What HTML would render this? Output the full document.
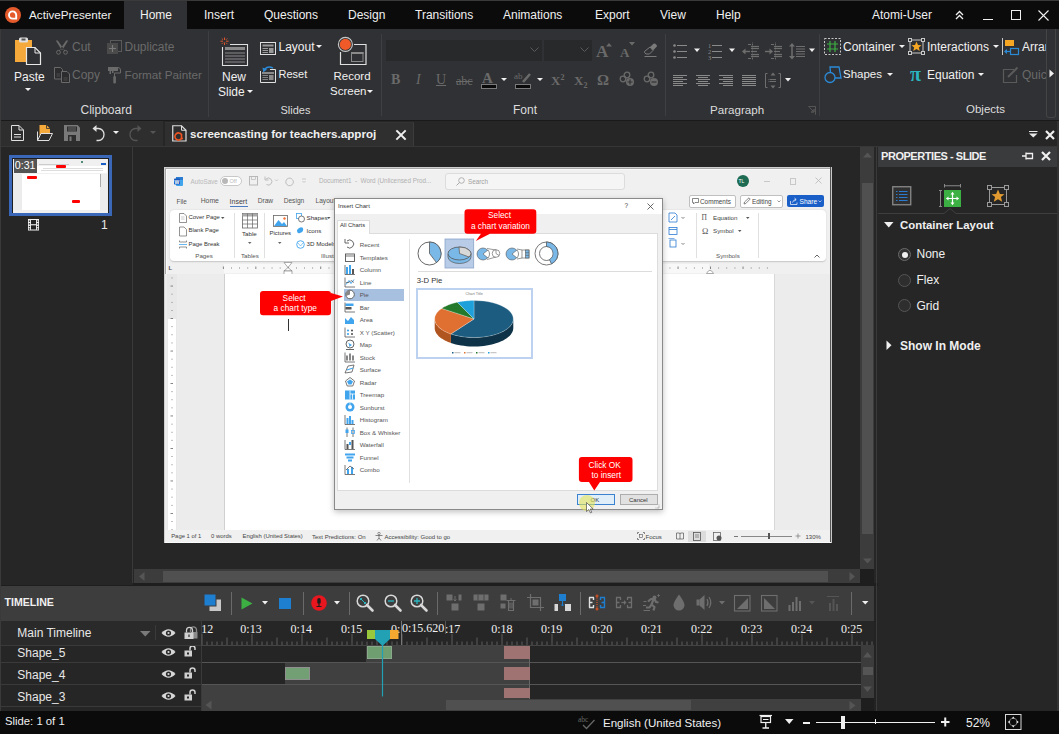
<!DOCTYPE html>
<html><head><meta charset="utf-8">
<style>
*{box-sizing:border-box;margin:0;padding:0}
html,body{width:1059px;height:734px;overflow:hidden;background:#262626;font-family:"Liberation Sans",sans-serif;}
.a{position:absolute}
.t{position:absolute;white-space:nowrap;line-height:1;font-size:12px;color:#e8e8e8}
.dis{color:#6a6a6a}
.lbl{color:#dcdcdc}
svg{position:absolute;overflow:visible}
.w{font-family:"Liberation Sans",sans-serif;color:#444}
</style></head><body>
<!-- window top line -->
<div class="a" style="left:0;top:0;width:1059px;height:1px;background:#3a3a3a"></div>
<!-- TITLE BAR -->
<div class="a" id="titlebar" style="left:0;top:1px;width:1059px;height:28px;background:#0b0b0b"></div>
<div class="a" style="left:124px;top:1px;width:63px;height:28px;background:#303134"></div>
<div class="a" style="left:5px;top:7px;width:16px;height:16px;border-radius:50%;background:#e55a2b"></div>
<svg style="left:5px;top:7px" width="16" height="16"><path d="M11.2 8 A3.6 3.6 0 1 0 7.6 11.6 H11.2 V8" fill="none" stroke="#fff" stroke-width="1.9"/></svg>
<div class="t" style="left:29px;top:9px;font-size:11.7px;color:#f0f0f0">ActivePresenter</div>
<div class="t" style="left:140px;top:9px;color:#f0f0f0">Home</div>
<div class="t" style="left:204px;top:9px;color:#f0f0f0">Insert</div>
<div class="t" style="left:264px;top:9px;color:#f0f0f0">Questions</div>
<div class="t" style="left:348px;top:9px;color:#f0f0f0">Design</div>
<div class="t" style="left:415px;top:9px;color:#f0f0f0">Transitions</div>
<div class="t" style="left:503px;top:9px;color:#f0f0f0">Animations</div>
<div class="t" style="left:595px;top:9px;color:#f0f0f0">Export</div>
<div class="t" style="left:660px;top:9px;color:#f0f0f0">View</div>
<div class="t" style="left:716px;top:9px;color:#f0f0f0">Help</div>
<div class="t" style="left:872px;top:9px;color:#f0f0f0">Atomi-User</div>
<svg style="left:955px;top:10px" width="10" height="10"><path d="M1 5 L4.5 1.5 L8 5 M1 9 L4.5 5.5 L8 9" stroke="#f0f0f0" stroke-width="1.3" fill="none"/></svg>
<div class="a" style="left:983px;top:19px;width:10px;height:1px;background:#f0f0f0"></div>
<div class="a" style="left:1011px;top:10px;width:10px;height:10px;border:1px solid #f0f0f0"></div>
<svg style="left:1038px;top:10px" width="12" height="11"><path d="M0.5 0.5 L10.5 10.5 M10.5 0.5 L0.5 10.5" stroke="#f0f0f0" stroke-width="1.1"/></svg>

<!-- RIBBON -->
<div class="a" id="ribbon" style="left:0;top:29px;width:1059px;height:91px;background:#303134"></div>
<div class="a" style="left:0;top:120px;width:1059px;height:1px;background:#1a1a1a"></div>

<!-- Clipboard group -->
<svg style="left:14px;top:36px" width="28" height="30">
 <rect x="1" y="4" width="17" height="22" fill="#f5a93a"/>
 <rect x="5" y="1.5" width="9" height="5" rx="1.5" fill="#e0e0e0"/>
 <rect x="7.5" y="2.5" width="4" height="2" fill="#555"/>
 <path d="M12.5 11.5 H21 L26.5 17 V28.5 H12.5 Z" fill="#303134" stroke="#e8e8e8" stroke-width="1.2"/>
 <path d="M21 11.5 V17 H26.5" fill="none" stroke="#e8e8e8" stroke-width="1"/>
</svg>
<div class="t" style="left:14px;top:71px;color:#f0f0f0">Paste</div>
<svg style="left:25px;top:88px" width="7" height="4"><path d="M0 0 H6 L3 3Z" fill="#f0f0f0"/></svg>
<svg style="left:55px;top:40px" width="14" height="15"><path d="M0.8 0.5 L2.8 0.5 L8.2 8.3 L6.6 10Z M13.2 0.5 L11.2 0.5 L5.8 8.3 L7.4 10Z" fill="#6a6a6a"/><path d="M5.2 9.5 L4 11 M8.8 9.5 L10 11" stroke="#6a6a6a" stroke-width="1"/><circle cx="3.5" cy="12.3" r="1.9" fill="none" stroke="#6a6a6a" stroke-width="1"/><circle cx="10.5" cy="12.3" r="1.9" fill="none" stroke="#6a6a6a" stroke-width="1"/></svg>
<div class="t dis" style="left:72px;top:41px">Cut</div>
<svg style="left:107px;top:40px" width="15" height="15"><rect x="3.5" y="0.5" width="11" height="11" fill="none" stroke="#5a5a5a"/><rect x="0" y="3" width="11" height="11" fill="#4a4a4a"/><path d="M5.5 5 V12 M2 8.5 H9" stroke="#7a7a7a" stroke-width="1.2"/></svg>
<div class="t dis" style="left:124.5px;top:41px">Duplicate</div>
<svg style="left:54px;top:67px" width="17" height="16"><path d="M0.5 0.5 H6.5 L8.5 2.5 V12 H0.5Z" fill="#2c2c2e" stroke="#6a6a6a"/><path d="M2.5 7 H6 M2.5 9 H6" stroke="#555" stroke-width="0.8"/><path d="M7.5 4.5 H13 L15.5 7 V15.5 H7.5Z" fill="#2c2c2e" stroke="#6a6a6a"/><path d="M9.5 11 H13.5 M9.5 13 H13.5" stroke="#555" stroke-width="0.8"/></svg>
<div class="t dis" style="left:72px;top:69px">Copy</div>
<svg style="left:108px;top:67px" width="14" height="17"><path d="M0 0.5 H10 Q12.5 0.5 12.5 3 V6 H6.5 V9" fill="none" stroke="#6a6a6a" stroke-width="1"/><rect x="0" y="0.5" width="10" height="3.5" fill="#6a6a6a"/><rect x="1.5" y="4" width="1.5" height="3" fill="#6a6a6a"/><rect x="4" y="4" width="1.5" height="2" fill="#6a6a6a"/><rect x="5.3" y="9" width="2.6" height="7.5" rx="1" fill="#6a6a6a"/></svg>
<div class="t dis" style="left:124.5px;top:69px;font-size:11.7px">Format Painter</div>
<div class="t lbl" style="left:80.5px;top:104px">Clipboard</div>
<div class="a" style="left:208px;top:31px;width:1px;height:86px;background:#3e3f42"></div>

<!-- Slides group -->
<svg style="left:221px;top:36px" width="29" height="30">
 <path d="M3.5 1.5 V4 M3.5 6.5 V9 M-0.5 5.2 H2 M5 5.2 H7.5 M0.8 2.5 L2 3.7 M5 6.7 L6.2 7.9 M6.2 2.5 L5 3.7 M2 6.7 L0.8 7.9" stroke="#f05a2a" stroke-width="0.9"/>
 <path d="M9 8.5 H26.5 V29.5 H1.5 V11" fill="none" stroke="#e0e0e0" stroke-width="1.1"/>
 <rect x="4" y="11" width="20" height="3" fill="#8a8a8a"/>
 <path d="M4 17 H24 M4 20 H24 M4 23 H24 M4 26 H24" stroke="#8a8a8a" stroke-width="1"/>
</svg>
<div class="t" style="left:222px;top:71px;color:#f0f0f0">New</div>
<div class="t" style="left:218px;top:85.5px;color:#f0f0f0">Slide</div>
<svg style="left:247px;top:90px" width="7" height="4"><path d="M0 0 H6 L3 3Z" fill="#f0f0f0"/></svg>
<svg style="left:260px;top:42px" width="17" height="14"><rect x="0.5" y="0.5" width="15" height="12" fill="none" stroke="#e0e0e0"/><rect x="2.5" y="2.5" width="11" height="2" fill="#9a9a9a"/><path d="M2.5 6.5 H8 M2.5 8.5 H8 M2.5 10.5 H8" stroke="#9a9a9a"/><rect x="9" y="6" width="4.5" height="5" fill="#9a9a9a"/></svg>
<div class="t" style="left:278.5px;top:41px;color:#f0f0f0">Layout</div>
<svg style="left:316px;top:45px" width="7" height="4"><path d="M0 0 H6 L3 3Z" fill="#f0f0f0"/></svg>
<svg style="left:260px;top:66px" width="17" height="17"><path d="M0.5 5 V16.5 H15.5 V3.5 H10" fill="none" stroke="#e0e0e0"/><rect x="2" y="6" width="12" height="2" fill="#8a8a8a"/><path d="M2.5 9.5 H8 M2.5 11.5 H8 M2.5 13.5 H8" stroke="#8a8a8a" stroke-width="0.9"/><rect x="9" y="9" width="4.5" height="5" fill="#8a8a8a"/><path d="M13 2.2 Q8.5 -0.5 4.5 3.3" stroke="#2a8ad8" stroke-width="1.4" fill="none"/><path d="M2.5 1.5 L3.3 6.2 L7 3.5Z" fill="#2a8ad8"/></svg>
<div class="t" style="left:278.5px;top:69px;color:#f0f0f0;font-size:11px">Reset</div>
<svg style="left:336px;top:35px" width="32" height="32">
 <path d="M18 9.5 H30 V29.5 H4.5 V17" fill="none" stroke="#e0e0e0" stroke-width="1.2"/>
 <rect x="15.5" y="17.5" width="11.5" height="9" fill="none" stroke="#8a8a8a" stroke-width="1"/>
 <rect x="15" y="17" width="12.5" height="2" fill="#8a8a8a"/>
 <circle cx="9.4" cy="9.4" r="7" fill="#303134" stroke="#c8c8c8" stroke-width="1.1"/>
 <circle cx="9.4" cy="9.4" r="5.6" fill="#f05a28"/>
</svg>
<div class="t" style="left:333.5px;top:71px;color:#f0f0f0;font-size:11.5px">Record</div>
<div class="t" style="left:330px;top:85.5px;color:#f0f0f0;font-size:11.5px">Screen</div>
<svg style="left:367px;top:90px" width="7" height="4"><path d="M0 0 H6 L3 3Z" fill="#f0f0f0"/></svg>
<div class="t lbl" style="left:280.5px;top:104.5px;font-size:11px">Slides</div>
<div class="a" style="left:381px;top:34px;width:1px;height:82px;background:#3e3f42"></div>

<!-- Font group -->
<div class="a" style="left:385.5px;top:39.5px;width:156px;height:21px;background:#28292b"></div>
<svg style="left:530px;top:47px" width="9" height="6"><path d="M0.5 0.5 L4.5 4.5 L8.5 0.5" stroke="#5a5a5a" fill="none"/></svg>
<div class="a" style="left:543.5px;top:39.5px;width:48.5px;height:21px;background:#28292b"></div>
<svg style="left:580px;top:47px" width="9" height="6"><path d="M0.5 0.5 L4.5 4.5 L8.5 0.5" stroke="#5a5a5a" fill="none"/></svg>
<div class="a" style="left:596px;top:42.5px;font-family:'Liberation Serif';font-size:17px;font-weight:bold;color:#6a6a6a;line-height:1">A</div>
<svg style="left:606px;top:42.5px" width="7" height="4"><path d="M0 3.5 L3 0 L6 3.5Z" fill="#6a6a6a"/></svg>
<div class="a" style="left:620px;top:46px;font-family:'Liberation Serif';font-size:13px;font-weight:bold;color:#6a6a6a;line-height:1">A</div>
<svg style="left:629px;top:42px" width="7" height="4"><path d="M0 0 L3 3.5 L6 0Z" fill="#6a6a6a"/></svg>
<svg style="left:644px;top:43px" width="14" height="15"><path d="M6 4 L9.5 0.8 Q10.5 0 11.3 0.8 L12.6 2.1 Q13.4 3 12.6 3.8 L9 7.5Z" fill="#7a7a7a"/><path d="M6 4 L9 7.5 L5.5 11 H2 L0.8 9.8 Q0 9 0.8 8.2Z" fill="none" stroke="#7a7a7a" stroke-width="1"/><path d="M0.5 13.5 H12.5" stroke="#7a7a7a" stroke-width="1"/></svg>
<div class="a" style="left:391px;top:73px;font-family:'Liberation Serif';font-size:14px;font-weight:bold;color:#6a6a6a;line-height:1">B</div>
<div class="a" style="left:416px;top:73px;font-family:'Liberation Serif';font-size:14px;font-style:italic;color:#6a6a6a;line-height:1">I</div>
<div class="a" style="left:436px;top:73px;font-family:'Liberation Serif';font-size:14px;color:#6a6a6a;line-height:1;text-decoration:underline">U</div>
<div class="a" style="left:456px;top:75px;font-family:'Liberation Serif';font-size:12px;color:#6a6a6a;line-height:1;text-decoration:line-through">abc</div>
<div class="a" style="left:482px;top:70.5px;font-family:'Liberation Serif';font-size:15px;font-weight:bold;color:#6a6a6a;line-height:1">A</div>
<div class="a" style="left:480.5px;top:84px;width:16px;height:4.5px;background:#0a0a0a;border:1px solid #7a7a7a"></div>
<svg style="left:501px;top:78px" width="7" height="4"><path d="M0 0 H6 L3 3Z" fill="#f0f0f0"/></svg>
<div class="a" style="left:514px;top:72px;font-family:'Liberation Serif';font-size:9px;color:#6a6a6a;line-height:1">ab</div>
<svg style="left:520px;top:72px" width="12" height="12"><path d="M3 10 L10 2" stroke="#6a6a6a" stroke-width="2.5"/></svg>
<div class="a" style="left:515px;top:84px;width:16px;height:4.5px;background:#0a0a0a;border:1px solid #7a7a7a"></div>
<svg style="left:537px;top:78px" width="7" height="4"><path d="M0 0 H6 L3 3Z" fill="#f0f0f0"/></svg>
<div class="a" style="left:551px;top:74px;font-family:'Liberation Serif';font-size:13px;font-weight:bold;color:#6a6a6a;line-height:1">X<sup style="font-size:8px;vertical-align:5px">2</sup></div>
<div class="a" style="left:574px;top:74px;font-family:'Liberation Serif';font-size:13px;font-weight:bold;color:#6a6a6a;line-height:1">X<sub style="font-size:8px;vertical-align:-3px">2</sub></div>
<div class="a" style="left:597px;top:73px;font-family:'Liberation Serif';font-size:15px;font-weight:bold;color:#6a6a6a;line-height:1">&#937;</div>
<svg style="left:619px;top:71px" width="16" height="16"><circle cx="4" cy="8" r="2.8" fill="none" stroke="#6a6a6a" stroke-width="1.3"/><circle cx="8" cy="4" r="2.8" fill="none" stroke="#6a6a6a" stroke-width="1.3"/><circle cx="11" cy="11" r="4" fill="#6a6a6a"/><path d="M11 8.5 V13.5 M8.5 11 H13.5" stroke="#303134" stroke-width="1.2"/></svg>
<svg style="left:643px;top:71px" width="16" height="16"><circle cx="4" cy="8" r="2.8" fill="none" stroke="#6a6a6a" stroke-width="1.3"/><circle cx="8" cy="4" r="2.8" fill="none" stroke="#6a6a6a" stroke-width="1.3"/><circle cx="11" cy="11" r="4" fill="#6a6a6a"/><path d="M8.5 11 H13.5" stroke="#303134" stroke-width="1.2"/></svg>
<div class="t lbl" style="left:513px;top:104px">Font</div>
<div class="a" style="left:665px;top:34px;width:1px;height:82px;background:#3e3f42"></div>


<!-- Paragraph group -->
<svg style="left:668px;top:38px" width="152" height="54"><circle cx="6.5" cy="7.5" r="1.3" fill="#8a8a8a"/><path d="M9 7.5 H19" stroke="#8a8a8a" stroke-width="1"/><circle cx="6.5" cy="13.5" r="1.3" fill="#8a8a8a"/><path d="M9 13.5 H19" stroke="#8a8a8a" stroke-width="1"/><circle cx="6.5" cy="19.5" r="1.3" fill="#8a8a8a"/><path d="M9 19.5 H19" stroke="#8a8a8a" stroke-width="1"/><path d="M26 10.5 H32 L29 14Z" fill="#f0f0f0"/><text x="40" y="10.3" font-size="6.5" font-family="Liberation Serif" fill="#8a8a8a">1</text><path d="M44 7.5 H54" stroke="#8a8a8a" stroke-width="1"/><text x="40" y="16.3" font-size="6.5" font-family="Liberation Serif" fill="#8a8a8a">2</text><path d="M44 13.5 H54" stroke="#8a8a8a" stroke-width="1"/><text x="40" y="22.3" font-size="6.5" font-family="Liberation Serif" fill="#8a8a8a">3</text><path d="M44 19.5 H54" stroke="#8a8a8a" stroke-width="1"/><path d="M61 10.5 H67 L64 14Z" fill="#f0f0f0"/><path d="M80 6.5 H83" stroke="#6e6e6e" stroke-width="1"/><path d="M84 6.5 H85" stroke="#6e6e6e" stroke-width="1"/><path d="M83 8.5 H91" stroke="#6e6e6e" stroke-width="1.2"/><path d="M83 10.5 H91" stroke="#6e6e6e" stroke-width="1.2"/><path d="M83 13.5 H89" stroke="#6e6e6e" stroke-width="1.2"/><path d="M83 16.5 H91" stroke="#6e6e6e" stroke-width="1.2"/><path d="M83 18.5 H91" stroke="#6e6e6e" stroke-width="1.2"/><path d="M80 20.5 H83" stroke="#6e6e6e" stroke-width="1"/><path d="M84 20.5 H85" stroke="#6e6e6e" stroke-width="1"/><path d="M84.5 4.5 V22.5" stroke="#6e6e6e" stroke-width="0.8" stroke-dasharray="1 1"/><path d="M74 13.5 L77.5 10.5 V16.5Z" fill="#6e6e6e"/><path d="M77 13.5 H82" stroke="#6e6e6e" stroke-width="1.4"/><path d="M103 6.5 H106" stroke="#6e6e6e" stroke-width="1"/><path d="M107 6.5 H108" stroke="#6e6e6e" stroke-width="1"/><path d="M106 8.5 H114" stroke="#6e6e6e" stroke-width="1.2"/><path d="M106 10.5 H114" stroke="#6e6e6e" stroke-width="1.2"/><path d="M106 13.5 H112" stroke="#6e6e6e" stroke-width="1.2"/><path d="M106 16.5 H114" stroke="#6e6e6e" stroke-width="1.2"/><path d="M106 18.5 H114" stroke="#6e6e6e" stroke-width="1.2"/><path d="M103 20.5 H106" stroke="#6e6e6e" stroke-width="1"/><path d="M107 20.5 H108" stroke="#6e6e6e" stroke-width="1"/><path d="M107.5 4.5 V22.5" stroke="#6e6e6e" stroke-width="0.8" stroke-dasharray="1 1"/><path d="M105 13.5 L101.5 10.5 V16.5Z" fill="#6e6e6e"/><path d="M97 13.5 H102" stroke="#6e6e6e" stroke-width="1.4"/><path d="M124 5 L121 8.5 H127Z M124 21.5 L121 18 H127Z" fill="#6e6e6e"/><path d="M124 8 V18.5" stroke="#6e6e6e" stroke-width="1.5"/><path d="M128 8.5 H137" stroke="#6e6e6e" stroke-width="1"/><path d="M128 11 H137" stroke="#6e6e6e" stroke-width="1"/><path d="M128 13.5 H137" stroke="#6e6e6e" stroke-width="1"/><path d="M128 16 H137" stroke="#6e6e6e" stroke-width="1"/><path d="M128 18.5 H137" stroke="#6e6e6e" stroke-width="1"/><path d="M141 10.5 H147 L144 14Z" fill="#f0f0f0"/><path d="M5 37.5 H19" stroke="#8a8a8a" stroke-width="1"/><path d="M5 39.5 H15" stroke="#8a8a8a" stroke-width="1"/><path d="M5 41.5 H19" stroke="#8a8a8a" stroke-width="1"/><path d="M5 43.5 H15" stroke="#8a8a8a" stroke-width="1"/><path d="M5 45.5 H19" stroke="#8a8a8a" stroke-width="1"/><path d="M5 47.5 H15" stroke="#8a8a8a" stroke-width="1"/><path d="M28 37.5 H42" stroke="#8a8a8a" stroke-width="1"/><path d="M30 39.5 H40" stroke="#8a8a8a" stroke-width="1"/><path d="M28 41.5 H42" stroke="#8a8a8a" stroke-width="1"/><path d="M30 43.5 H40" stroke="#8a8a8a" stroke-width="1"/><path d="M28 45.5 H42" stroke="#8a8a8a" stroke-width="1"/><path d="M30 47.5 H40" stroke="#8a8a8a" stroke-width="1"/><path d="M51 37.5 H65" stroke="#8a8a8a" stroke-width="1"/><path d="M55 39.5 H65" stroke="#8a8a8a" stroke-width="1"/><path d="M51 41.5 H65" stroke="#8a8a8a" stroke-width="1"/><path d="M55 43.5 H65" stroke="#8a8a8a" stroke-width="1"/><path d="M51 45.5 H65" stroke="#8a8a8a" stroke-width="1"/><path d="M55 47.5 H65" stroke="#8a8a8a" stroke-width="1"/><path d="M74 37.5 H88" stroke="#8a8a8a" stroke-width="1"/><path d="M74 39.5 H88" stroke="#8a8a8a" stroke-width="1"/><path d="M74 41.5 H88" stroke="#8a8a8a" stroke-width="1"/><path d="M74 43.5 H88" stroke="#8a8a8a" stroke-width="1"/><path d="M74 45.5 H88" stroke="#8a8a8a" stroke-width="1"/><path d="M74 47.5 H88" stroke="#8a8a8a" stroke-width="1"/><path d="M99.5 35.5 H97.5 V49.5 H99.5 M110.5 35.5 H112.5 V49.5 H110.5" fill="none" stroke="#6e6e6e"/><path d="M105 34.5 L102.5 37.5 H107.5Z M105 50.5 L102.5 47.5 H107.5Z" fill="#6e6e6e"/><path d="M102 41.5 H108" stroke="#6e6e6e" stroke-width="1"/><path d="M102 43.5 H108" stroke="#6e6e6e" stroke-width="1"/><path d="M100.5 41.5 H101.5 M100.5 43.5 H101.5" stroke="#6e6e6e"/><path d="M117 40 H123 L120 43.5Z" fill="#f0f0f0"/></svg>
<svg style="left:808px;top:106px" width="8" height="9"><path d="M0.5 0.5 H7.5 V8.5" stroke="#555" fill="none"/><path d="M1.5 1.5 L6 6 M3 6 H6 V3" stroke="#555" fill="none"/></svg>
<div class="t lbl" style="left:710px;top:104px;font-size:11.6px">Paragraph</div>
<svg style="left:808px;top:106px" width="8" height="9"><path d="M0.5 0.5 H7.5 V8.5" stroke="#555" fill="none"/><path d="M1.5 1.5 L6 6 M3 6 H6 V3" stroke="#555" fill="none"/></svg>
<div class="a" style="left:819px;top:34px;width:1px;height:82px;background:#3e3f42"></div>

<!-- Objects group -->
<svg style="left:824px;top:38px" width="18" height="18"><rect x="0.5" y="0.5" width="16" height="16" fill="none" stroke="#c8c8c8" stroke-dasharray="2 1.5"/><path d="M6 3 V14 M11 3 V14 M3 6 H14 M3 11 H14" stroke="#3cb043" stroke-width="1.2"/></svg>
<div class="t" style="left:843px;top:41px;color:#f0f0f0">Container</div>
<svg style="left:899px;top:45px" width="7" height="4"><path d="M0 0 H6 L3 3Z" fill="#f0f0f0"/></svg>
<svg style="left:908px;top:38px" width="18" height="18"><rect x="2" y="2" width="13" height="13" fill="none" stroke="#c8c8c8"/><rect x="0.5" y="0.5" width="3" height="3" fill="#303134" stroke="#c8c8c8"/><rect x="13.5" y="0.5" width="3" height="3" fill="#303134" stroke="#c8c8c8"/><rect x="0.5" y="13.5" width="3" height="3" fill="#303134" stroke="#c8c8c8"/><rect x="13.5" y="13.5" width="3" height="3" fill="#303134" stroke="#c8c8c8"/><path d="M8.5 3.5 L10 7 L13.5 7.2 L10.8 9.4 L11.8 13 L8.5 11 L5.2 13 L6.2 9.4 L3.5 7.2 L7 7Z" fill="#f5a623"/></svg>
<div class="t" style="left:927px;top:41px;color:#f0f0f0">Interactions</div>
<svg style="left:993px;top:45px" width="7" height="4"><path d="M0 0 H6 L3 3Z" fill="#f0f0f0"/></svg>
<svg style="left:1002px;top:38px" width="18" height="18"><path d="M0.5 0 V17" stroke="#c8c8c8"/><rect x="3" y="2" width="9" height="6" fill="#f5a623"/><rect x="8.5" y="10.5" width="8" height="6" fill="none" stroke="#2a8ad8" stroke-width="1.2"/><path d="M3 13.5 H8" stroke="#2a8ad8" stroke-width="1.2"/><path d="M2 13.5 L5 11 V16Z" fill="#2a8ad8"/></svg>
<div class="a" style="left:1020px;top:29px;width:26px;height:30px;overflow:hidden"><div class="t" style="left:2px;top:12px;color:#f0f0f0">Arrange</div></div>
<svg style="left:824px;top:66px" width="18" height="18"><path d="M6 1 H15 L17 12 H7Z" fill="none" stroke="#2a8ad8" stroke-width="1.3"/><circle cx="6" cy="11.5" r="5" fill="#303134" stroke="#2a8ad8" stroke-width="1.3"/></svg>
<div class="t" style="left:843px;top:69px;color:#f0f0f0;font-size:11.5px">Shapes</div>
<svg style="left:887px;top:73px" width="7" height="4"><path d="M0 0 H6 L3 3Z" fill="#f0f0f0"/></svg>
<div class="a" style="left:910px;top:64px;font-family:'Liberation Serif';font-size:20px;font-weight:bold;color:#2ab5c0;line-height:1">&#960;</div>
<div class="t" style="left:927px;top:69px;color:#f0f0f0">Equation</div>
<svg style="left:978px;top:73px" width="7" height="4"><path d="M0 0 H6 L3 3Z" fill="#f0f0f0"/></svg>
<svg style="left:1002px;top:66px" width="18" height="18"><path d="M12 3.5 H1.5 V16.5 H14.5 V9" fill="none" stroke="#5a5a5a" stroke-width="1.2"/><path d="M6 11 L15.5 1.5" stroke="#5a5a5a" stroke-width="2"/></svg>
<div class="a" style="left:1020px;top:60px;width:26px;height:28px;overflow:hidden"><div class="t dis" style="left:2px;top:9px">Quick</div></div>
<div class="a" style="left:1046px;top:29px;width:10px;height:89px;border:1px solid #444;border-top:none;border-radius:0 0 3px 3px"></div>
<svg style="left:1049px;top:69px" width="6" height="9"><path d="M0.5 0.5 L5 4.5 L0.5 8.5Z" fill="#f0f0f0"/></svg>
<div class="t lbl" style="left:966px;top:104px;font-size:11.5px">Objects</div>

<!-- RIBBON_CONTENT -->

<!-- QA BAR -->
<div class="a" style="left:0;top:121px;width:1059px;height:25px;background:#262626"></div>
<div class="a" style="left:1px;top:121px;width:162px;height:25px;background:#2e2e2e"></div>
<div class="a" style="left:165px;top:122px;width:249px;height:24px;background:#2f2f2f;border-right:1px solid #3c3c3c;border-top:1px solid #333"></div>

<svg style="left:10px;top:125px" width="15" height="17"><path d="M1.5 0.5 H9 L13.5 5 V15.5 H1.5Z" fill="none" stroke="#e0e0e0" stroke-width="1"/><path d="M9 0.5 V5 H13.5" fill="none" stroke="#e0e0e0" stroke-width="1"/><path d="M4 9.5 H11 M4 12 H11" stroke="#e0e0e0" stroke-width="1"/></svg>
<svg style="left:36px;top:125px" width="18" height="17"><path d="M3.5 0 H10.5 L14 3.5 V10 H3.5Z" fill="#f5a93a"/><path d="M10.5 0 V3.5 H14" fill="none" stroke="#2e2e2e" stroke-width="0.8"/><path d="M1.5 6.5 V15.5 H13 L16.5 8.5 H5 L1.5 15.5" fill="#2e2e2e" stroke="#e0e0e0" stroke-width="1"/></svg>
<svg style="left:64px;top:125px" width="17" height="17"><path d="M0 0 H13.5 L16 2.5 V16 H0Z" fill="#7a7a7a"/><rect x="3" y="1.5" width="10" height="5" fill="#2e2e2e"/><path d="M4 3 H12 M4 5 H12" stroke="#7a7a7a" stroke-width="0.8"/><rect x="4" y="10" width="8" height="6" fill="#2e2e2e"/><rect x="5.5" y="11.5" width="2" height="4.5" fill="#7a7a7a"/></svg>
<svg style="left:92px;top:125px" width="14" height="17"><path d="M3 3.5 H6.5 A5.5 6 0 0 1 6.5 15.5 H4.5" fill="none" stroke="#e0e0e0" stroke-width="1.3"/><path d="M0.5 3.5 L4.5 0 V7Z" fill="#e0e0e0"/></svg>
<svg style="left:113px;top:131px" width="7" height="4"><path d="M0 0 H6 L3 3Z" fill="#f0f0f0"/></svg>
<svg style="left:128px;top:125px" width="14" height="17"><path d="M11 3.5 H7.5 A5.5 6 0 0 0 7.5 15.5 H9.5" fill="none" stroke="#555" stroke-width="1.3"/><path d="M13.5 3.5 L9.5 0 V7Z" fill="#555"/></svg>
<svg style="left:150px;top:131px" width="7" height="4"><path d="M0 0 H6 L3 3Z" fill="#555"/></svg>
<svg style="left:172px;top:125px" width="15" height="17"><path d="M0.75 0.75 H9.5 L14 5.25 V16 H0.75Z" fill="#2e2e2e" stroke="#e0e0e0" stroke-width="1.2"/><path d="M9.5 0.75 V5.25 H14" fill="none" stroke="#e0e0e0" stroke-width="1"/><path d="M9.5 13.5 A3.6 3.6 0 1 1 9.5 9.5 V13.5 H11" fill="none" stroke="#ee5522" stroke-width="1.6"/></svg>
<div class="t" style="left:190px;top:128px;font-size:11.6px;font-weight:bold;color:#f0f0f0">screencasting for teachers.approj</div>
<svg style="left:396px;top:129.5px" width="10" height="10"><path d="M1 1 L9 9 M9 1 L1 9" stroke="#f0f0f0" stroke-width="1.9" stroke-linecap="square"/></svg>
<svg style="left:1029px;top:131px" width="9" height="7"><path d="M0 0.5 H8.5" stroke="#e8e8e8"/><path d="M0 2.5 H8.5 L4.25 6.5Z" fill="#e8e8e8"/></svg>
<svg style="left:1045px;top:130px" width="10" height="10"><path d="M1 1 L9 9 M9 1 L1 9" stroke="#f0f0f0" stroke-width="2.2"/></svg>

<!-- QA_CONTENT -->

<!-- MAIN -->

<div class="a" style="left:0;top:146px;width:1059px;height:1px;background:#363636"></div>
<div class="a" style="left:0;top:147px;width:1px;height:564px;background:#333"></div>
<!-- slide panel -->
<div class="a" style="left:132px;top:147px;width:1px;height:436px;background:#3a3a3a"></div>
<div class="a" style="left:9px;top:155px;width:103px;height:61px;border:3px solid #3b67b8;background:#1e1e1e"></div>
<div class="a" style="left:13px;top:158.7px;width:95px;height:54px;background:#f0f0f0;overflow:hidden">
  <div class="a" style="left:0;top:15px;width:95px;height:39px;background:#ececec"></div>
  <div class="a" style="left:9.4px;top:15px;width:77.6px;height:36px;background:#fff"></div>
  <div class="a" style="left:1px;top:7px;width:93px;height:7px;background:#fff;border-radius:1px"></div>
  <div class="a" style="left:43px;top:6px;width:9.8px;height:3.7px;background:#f00;border-radius:1px"></div>
  <div class="a" style="left:14px;top:17.7px;width:9.9px;height:3.1px;background:#f00;border-radius:1px"></div>
  <div class="a" style="left:59px;top:41.3px;width:7.7px;height:3.5px;background:#f00;border-radius:1px"></div>
  <div class="a" style="left:88px;top:4.3px;width:5px;height:2px;background:#1a5fc8"></div>
  <div class="a" style="left:26px;top:5px;width:30px;height:0.8px;background:#ccc"></div>
  <div class="a" style="left:30px;top:9px;width:60px;height:0.7px;background:#ddd"></div>
  <div class="a" style="left:28px;top:11px;width:62px;height:0.7px;background:#ddd"></div>
  <div class="a" style="left:0;top:51px;width:95px;height:3px;background:#f0f0f0"></div>
  <div class="a" style="left:68px;top:2.5px;width:2px;height:2px;background:#1d6b52;border-radius:50%"></div>
  <div class="a" style="left:87px;top:15px;width:1px;height:13px;background:#aaa"></div>
</div>
<div class="a" style="left:13.5px;top:158.7px;width:23.5px;height:14px;background:#545454"></div>
<div class="t" style="left:14.8px;top:160.2px;font-size:10.6px;color:#fff">0:31</div>
<svg style="left:27.5px;top:219px" width="11" height="12"><rect x="0" y="0" width="11" height="11.5" fill="#f0f0f0"/><rect x="3" y="1" width="5" height="4.2" fill="#232323"/><rect x="3" y="6.3" width="5" height="4.2" fill="#232323"/><rect x="0.8" y="1.5" width="1.3" height="1.3" fill="#232323"/><rect x="0.8" y="4.2" width="1.3" height="1.3" fill="#232323"/><rect x="0.8" y="6.9" width="1.3" height="1.3" fill="#232323"/><rect x="0.8" y="9.3" width="1.3" height="1.3" fill="#232323"/><rect x="8.9" y="1.5" width="1.3" height="1.3" fill="#232323"/><rect x="8.9" y="4.2" width="1.3" height="1.3" fill="#232323"/><rect x="8.9" y="6.9" width="1.3" height="1.3" fill="#232323"/><rect x="8.9" y="9.3" width="1.3" height="1.3" fill="#232323"/></svg>
<div class="t" style="left:101px;top:219px;color:#e8e8e8">1</div>

<!-- canvas scrollbars -->
<div class="a" style="left:860px;top:147px;width:14px;height:422px;background:#3c3c3c"></div>
<svg style="left:863px;top:151px" width="9" height="7"><path d="M0 6.5 L4.5 1.5 L9 6.5Z" fill="#555"/></svg>
<div class="a" style="left:862px;top:183px;width:11px;height:351px;background:#505050"></div>
<svg style="left:863px;top:558px" width="9" height="7"><path d="M0 0.5 L4.5 5.5 L9 0.5Z" fill="#555"/></svg>
<div class="a" style="left:134px;top:569px;width:726px;height:13.5px;background:#3c3c3c"></div>
<svg style="left:138px;top:572px" width="7" height="9"><path d="M6.5 0 L1 4.5 L6.5 9Z" fill="#555"/></svg>
<div class="a" style="left:163px;top:570.5px;width:665px;height:11px;background:#505050"></div>
<svg style="left:849px;top:572px" width="7" height="9"><path d="M0.5 0 L6 4.5 L0.5 9Z" fill="#555"/></svg>
<div class="a" style="left:860px;top:569px;width:14px;height:13.5px;background:#1e1e1e"></div>
<div class="a" style="left:133px;top:582.5px;width:745px;height:3px;background:#1e1e1e"></div><div class="a" style="left:0;top:584.5px;width:133px;height:1px;background:#1e1e1e"></div>
<!-- splitter -->
<div class="a" style="left:876px;top:147px;width:1px;height:564px;background:#3a3a3a"></div>

<!-- PROPERTIES -->
<div class="a" style="left:878px;top:147px;width:181px;height:564px;background:#262626"></div>
<div class="a" style="left:878px;top:147px;width:181px;height:20px;background:#3a3b3d"></div>
<div class="t" style="left:881px;top:151px;font-size:11px;font-weight:bold;color:#f0f0f0;letter-spacing:-0.45px">PROPERTIES - SLIDE</div>
<svg style="left:1022px;top:151px" width="12" height="10"><path d="M0 5 H4 M4 1.5 V8.5 M4 2.5 H10.5 V7.5 H4" stroke="#f0f0f0" stroke-width="1.3" fill="none"/></svg>
<svg style="left:1041px;top:151px" width="10" height="10"><path d="M1 1 L9 9 M9 1 L1 9" stroke="#f0f0f0" stroke-width="2.2"/></svg>
<svg style="left:892px;top:186px" width="20" height="20"><rect x="0.75" y="0.75" width="18" height="18" fill="#303030" stroke="#8a8a8a" stroke-width="1.3"/><path d="M4 5.5 H5.5 M7 5.5 H15.5 M4 8.5 H5.5 M7 8.5 H15.5 M4 11.5 H5.5 M7 11.5 H15.5 M4 14.5 H5.5 M7 14.5 H15.5" stroke="#2a7ad0" stroke-width="1.2"/></svg>
<svg style="left:939px;top:184px" width="23" height="24"><path d="M5.5 0 V3.5 M21.5 0 V3.5 M5.5 1.75 H21.5" stroke="#8a8a8a" fill="none"/><path d="M0 6.5 H3 M0 22.5 H3 M1.5 6.5 V22.5" stroke="#8a8a8a" fill="none"/><rect x="5" y="6" width="17" height="17" fill="#3cb043"/><path d="M13.5 8.5 V20.5 M7.5 14.5 H19.5" stroke="#fff" stroke-width="1.2"/><path d="M13.5 8 L11.5 10.5 H15.5Z M13.5 21 L11.5 18.5 H15.5Z M7 14.5 L9.5 12.5 V16.5Z M20 14.5 L17.5 12.5 V16.5Z" fill="#fff"/></svg>
<svg style="left:987px;top:185px" width="23" height="23"><rect x="2.5" y="2.5" width="17" height="17" fill="none" stroke="#9a9a9a"/><rect x="0.5" y="0.5" width="4" height="4" fill="#262626" stroke="#9a9a9a"/><rect x="17.5" y="0.5" width="4" height="4" fill="#262626" stroke="#9a9a9a"/><rect x="0.5" y="17.5" width="4" height="4" fill="#262626" stroke="#9a9a9a"/><rect x="17.5" y="17.5" width="4" height="4" fill="#262626" stroke="#9a9a9a"/><path d="M11 4.5 L12.9 9 L17.5 9.2 L13.9 12.1 L15.2 16.8 L11 14.2 L6.8 16.8 L8.1 12.1 L4.5 9.2 L9.1 9Z" fill="#e09a30"/></svg>
<svg style="left:878px;top:208px" width="181" height="7"><path d="M0 5.5 H66 L72 0.5 L78 5.5 H181" stroke="#3e3e3e" fill="none"/></svg>
<svg style="left:884px;top:222px" width="10" height="6"><path d="M0 0 H9.5 L4.75 5.5Z" fill="#f0f0f0"/></svg>
<div class="t" style="left:900px;top:219.5px;font-size:11.4px;font-weight:bold;color:#f0f0f0">Container Layout</div>
<div class="a" style="left:898px;top:248px;width:13px;height:13px;border-radius:50%;border:1px solid #6a6a6a;background:#333"></div>
<div class="a" style="left:901.5px;top:251.5px;width:6px;height:6px;border-radius:50%;background:#f0f0f0"></div>
<div class="t" style="left:916.5px;top:248px;color:#f0f0f0">None</div>
<div class="a" style="left:898px;top:273.5px;width:13px;height:13px;border-radius:50%;border:1px solid #555;background:#2e2e2e"></div>
<div class="t" style="left:916.5px;top:274px;color:#f0f0f0">Flex</div>
<div class="a" style="left:898px;top:299px;width:13px;height:13px;border-radius:50%;border:1px solid #555;background:#2e2e2e"></div>
<div class="t" style="left:916.5px;top:300px;color:#f0f0f0">Grid</div>
<svg style="left:886px;top:340px" width="6" height="11"><path d="M0.5 0.5 L5.5 5.25 L0.5 10Z" fill="#f0f0f0"/></svg>
<div class="t" style="left:900px;top:340px;font-weight:bold;color:#f0f0f0">Show In Mode</div>
<!-- SLIDE -->
<div class="a" style="left:164px;top:167px;width:668px;height:376px;background:#f0f0f0;border-top:1px solid #d0d0d0;border-left:1px solid #d0d0d0"></div>
<div class="a" style="left:165px;top:168px;width:665px;height:1px;background:#a8a8a8;"></div>
<div class="a" style="left:165px;top:168px;width:1px;height:374px;background:#a8a8a8;"></div>
<div class="a" style="left:166px;top:169px;width:664px;height:1px;background:#fafafa;"></div>
<div class="a" style="left:166px;top:169px;width:1px;height:373px;background:#fafafa;"></div>
<div class="a" style="left:830px;top:167px;width:1px;height:375px;background:#555;"></div>
<div class="a" style="left:831px;top:167px;width:1px;height:376px;background:#c8c8c8;"></div>
<svg style="left:173.5px;top:176.5px" width="9" height="9"><rect x="2" y="0" width="7" height="9" rx="1" fill="#41a5ee"/><rect x="2" y="0" width="7" height="3" fill="#2b7cd3"/><rect x="0" y="1.5" width="6" height="6" rx="0.8" fill="#185abd"/><text x="0.6" y="6.5" font-size="5" fill="#fff" font-weight="bold" font-family="Liberation Sans">W</text></svg>
<div class="t" style="left:190.5px;top:178.7px;font-size:6.3px;color:#b8b8b8;font-weight:400;">AutoSave</div>
<div class="a" style="left:219.5px;top:175.5px;width:22.5px;height:10px;background:#fff;border:1px solid #c8c8c8;border-radius:5px"></div>
<div class="a" style="left:221.5px;top:177.5px;width:6px;height:6px;background:#b8b8b8;border-radius:50%"></div>
<div class="t" style="left:229.5px;top:179.3px;font-size:5.5px;color:#b8b8b8;font-weight:400;">Off</div>
<svg style="left:249px;top:176px" width="60" height="10"><rect x="0.5" y="0.5" width="8" height="8.5" fill="none" stroke="#b8b8b8"/><rect x="2.5" y="0.5" width="4" height="3" fill="none" stroke="#b8b8b8" stroke-width="0.7"/><path d="M17 3 A3.5 3.5 0 1 1 17.5 8.5" fill="none" stroke="#b8b8b8" stroke-width="0.9"/><path d="M16 0.5 V4 H19.5" fill="none" stroke="#b8b8b8" stroke-width="0.9"/><path d="M26 3.5 L27.5 5 L29 3.5" fill="none" stroke="#b8b8b8" stroke-width="0.7"/><path d="M43 3 A3.8 3.8 0 1 0 43.5 3.5" fill="none" stroke="#b8b8b8" stroke-width="0.9"/><path d="M53 3 H57 M53.5 5 L55 6.5 L56.5 5" fill="none" stroke="#b8b8b8" stroke-width="0.7"/></svg>
<div class="t" style="left:319.0px;top:178.1px;font-size:6.35px;color:#b0b0b0;font-weight:400;">Document1&nbsp; -&nbsp; Word (Unlicensed Prod...</div>
<div class="a" style="left:445px;top:173px;width:180px;height:16.5px;background:#f5f5f5;border:1px solid #dcdcdc;border-radius:3px"></div>
<svg style="left:456px;top:177px" width="9" height="9"><circle cx="5.5" cy="3.5" r="2.8" fill="none" stroke="#a0a0a0" stroke-width="0.8"/><path d="M3.5 5.5 L0.5 8.5" stroke="#a0a0a0" stroke-width="0.9"/></svg>
<div class="t" style="left:468.0px;top:178.7px;font-size:6.3px;color:#a0a0a0;font-weight:400;">Search</div>
<div class="a" style="left:736.5px;top:175px;width:12px;height:12px;background:#1d6b52;border-radius:50%"></div>
<div class="t" style="left:738.5px;top:179.3px;font-size:5px;color:#fff;font-weight:400;">TL</div>
<div class="a" style="left:764px;top:181px;width:6px;height:1px;background:#c8c8c8;"></div>
<div class="a" style="left:789.5px;top:177.5px;width:6px;height:7px;background:transparent;border:0.8px solid #c8c8c8"></div>
<svg style="left:815px;top:177px" width="7" height="7"><path d="M0.5 0.5 L6.5 6.5 M6.5 0.5 L0.5 6.5" stroke="#b8b8b8" stroke-width="0.8"/></svg>
<div class="t" style="left:176.6px;top:198.5px;font-size:6.3px;color:#555;font-weight:400;">File</div>
<div class="t" style="left:200.7px;top:198.0px;font-size:6.8px;color:#555;font-weight:400;">Home</div>
<div class="t" style="left:229.6px;top:197.9px;font-size:7px;color:#444;font-weight:400;">Insert</div>
<div class="a" style="left:229.6px;top:205.8px;width:18.5px;height:1.6px;background:#4a7ac0;"></div>
<div class="t" style="left:257.7px;top:198.2px;font-size:6.6px;color:#555;font-weight:400;">Draw</div>
<div class="t" style="left:283.7px;top:198.2px;font-size:6.6px;color:#555;font-weight:400;">Design</div>
<div class="t" style="left:315.5px;top:198.2px;font-size:6.6px;color:#555;font-weight:400;">Layout</div>
<div class="a" style="left:689px;top:195px;width:47px;height:12.5px;background:#fff;border:1px solid #c0c0c0;border-radius:2px"></div>
<svg style="left:692px;top:198px" width="7" height="7"><path d="M0.5 0.5 H6.5 V4.5 H3 L1.5 6 V4.5 H0.5Z" fill="none" stroke="#555" stroke-width="0.7"/></svg>
<div class="t" style="left:700.0px;top:199.1px;font-size:6.4px;color:#444;font-weight:400;">Comments</div>
<div class="a" style="left:740px;top:195px;width:43px;height:12.5px;background:#fff;border:1px solid #c0c0c0;border-radius:2px"></div>
<svg style="left:743px;top:197px" width="8" height="8"><path d="M1 7 L1.5 5 L6 0.8 L7.2 2 L2.8 6.5Z" fill="none" stroke="#555" stroke-width="0.7"/></svg>
<div class="t" style="left:752.0px;top:199.1px;font-size:6.4px;color:#444;font-weight:400;">Editing</div>
<svg style="left:777px;top:200px" width="4" height="3"><path d="M0.5 0.5 L2 2 L3.5 0.5" fill="none" stroke="#555" stroke-width="0.6"/></svg>
<div class="a" style="left:787px;top:195px;width:37px;height:12.2px;background:#1a5fc8;border-radius:2px"></div>
<svg style="left:790px;top:198px" width="8" height="7"><path d="M0.5 3 V6.5 H7 V4.5 M2.5 4.5 Q3.5 1.5 6 1.5 M4.5 0 L6.2 1.5 L4.5 3" fill="none" stroke="#fff" stroke-width="0.7"/></svg>
<div class="t" style="left:799.5px;top:198.9px;font-size:6.6px;color:#fff;font-weight:400;">Share</div>
<svg style="left:818px;top:200px" width="4" height="3"><path d="M0.5 0.5 L2 2 L3.5 0.5" fill="none" stroke="#fff" stroke-width="0.6"/></svg>
<div class="a" style="left:170px;top:209.5px;width:656px;height:51.5px;background:#fff;border-radius:4px;box-shadow:0 0.5px 1.5px rgba(0,0,0,0.18)"></div>
<svg style="left:178.5px;top:212.5px" width="9" height="38"><path d="M0.5 0.5 H5 L7.5 3 V9.5 H0.5Z" fill="none" stroke="#666" stroke-width="0.7"/><path d="M2 4 H5.5 M2 6 H5.5" stroke="#999" stroke-width="0.5"/><path d="M0.5 14 H5 L7.5 16.5 V23 H0.5Z" fill="none" stroke="#666" stroke-width="0.7"/><path d="M0.5 27.5 V29 H7.5 V27.5 M0.5 35.5 V34 H7.5 V35.5" fill="none" stroke="#666" stroke-width="0.7"/><path d="M0 31.5 H8" stroke="#41a5ee" stroke-width="0.8"/></svg>
<div class="t" style="left:188.5px;top:214.7px;font-size:5.95px;color:#333;font-weight:400;">Cover Page</div>
<svg style="left:221px;top:216.5px" width="4" height="3"><path d="M0 0 H3.5 L1.75 2Z" fill="#555"/></svg>
<div class="t" style="left:188.5px;top:228.4px;font-size:5.95px;color:#333;font-weight:400;">Blank Page</div>
<div class="t" style="left:188.5px;top:241.6px;font-size:5.95px;color:#333;font-weight:400;">Page Break</div>
<div class="t" style="left:195.3px;top:252.5px;font-size:6.2px;color:#555;font-weight:400;">Pages</div>
<div class="a" style="left:233.5px;top:213px;width:0.7px;height:45px;background:#e0e0e0;"></div>
<svg style="left:241.5px;top:213px" width="16" height="16"><rect x="0.5" y="0.5" width="15" height="14.5" fill="none" stroke="#666" stroke-width="0.8"/><rect x="0.5" y="0.5" width="15" height="3" fill="#aaa"/><path d="M5.5 0.5 V15 M10.5 0.5 V15 M0.5 7 H15.5 M0.5 11 H15.5" stroke="#666" stroke-width="0.7"/></svg>
<div class="t" style="left:242.0px;top:231.2px;font-size:6.2px;color:#333;font-weight:400;">Table</div>
<svg style="left:247.5px;top:242px" width="4" height="3"><path d="M0 0 H3.5 L1.75 2Z" fill="#666"/></svg>
<div class="t" style="left:241.0px;top:252.5px;font-size:6.2px;color:#555;font-weight:400;">Tables</div>
<div class="a" style="left:264px;top:213px;width:0.7px;height:45px;background:#e0e0e0;"></div>
<svg style="left:273px;top:214.5px" width="15" height="12"><rect x="0.5" y="0.5" width="14" height="11" fill="#fff" stroke="#666" stroke-width="0.8"/><path d="M1 11 L5.5 5 L9 9 L11 7 L14 11Z" fill="#41a5ee"/><circle cx="11.5" cy="3.5" r="1.2" fill="#f07030"/></svg>
<div class="t" style="left:269.6px;top:231.4px;font-size:5.95px;color:#333;font-weight:400;">Pictures</div>
<svg style="left:278px;top:242px" width="4" height="3"><path d="M0 0 H3.5 L1.75 2Z" fill="#666"/></svg>
<svg style="left:296px;top:213px" width="9" height="37"><rect x="0.5" y="0.5" width="5" height="5" fill="none" stroke="#41a5ee" stroke-width="0.8"/><circle cx="5.5" cy="6" r="3" fill="#fff" stroke="#555" stroke-width="0.8"/><path d="M1 17 Q4 13 7 15 Q8 19 4 20 Q1 21 1 17Z" fill="#41a5ee"/><circle cx="4.5" cy="31.5" r="3.8" fill="none" stroke="#41a5ee" stroke-width="0.9"/><path d="M2 30 L4.5 33 L7 30" fill="none" stroke="#41a5ee" stroke-width="0.6"/></svg>
<div class="t" style="left:306.5px;top:214.5px;font-size:6.2px;color:#333;font-weight:400;">Shapes</div>
<svg style="left:327px;top:216.5px" width="4" height="3"><path d="M0 0 H3.5 L1.75 2Z" fill="#555"/></svg>
<div class="t" style="left:306.5px;top:228.2px;font-size:6.2px;color:#333;font-weight:400;">Icons</div>
<div class="t" style="left:306.5px;top:241.4px;font-size:6.2px;color:#333;font-weight:400;">3D Models</div>
<div class="t" style="left:321.0px;top:252.5px;font-size:6.2px;color:#555;font-weight:400;">Illustrations</div>
<svg style="left:668px;top:212px" width="24" height="38"><path d="M1 1 H7 L9 3 V10 H1Z" fill="none" stroke="#2b7cd3" stroke-width="0.8"/><path d="M3 8 L7 4" stroke="#2b7cd3" stroke-width="0.8"/><rect x="1" y="15.5" width="8" height="7" fill="none" stroke="#2b7cd3" stroke-width="0.8"/><path d="M1 17.5 H9" stroke="#2b7cd3" stroke-width="0.8"/><rect x="2" y="28" width="6" height="7" fill="none" stroke="#2b7cd3" stroke-width="0.8"/><path d="M0.5 26.5 H6.5" stroke="#2b7cd3" stroke-width="0.6"/><path d="M13.5 5 L15 6.5 L16.5 5 M13.5 31 L15 32.5 L16.5 31" fill="none" stroke="#555" stroke-width="0.7"/></svg>
<div class="a" style="left:695.5px;top:213px;width:0.7px;height:45px;background:#e0e0e0;"></div>
<div class="t" style="left:701.5px;top:214.2px;font-size:7.5px;color:#555;font-weight:400;font-family:'Liberation Serif'">&#928;</div>
<div class="t" style="left:713.0px;top:214.8px;font-size:6.2px;color:#444;font-weight:400;">Equation</div>
<svg style="left:746px;top:216.5px" width="4" height="3"><path d="M0 0 H3.5 L1.75 2Z" fill="#555"/></svg>
<div class="t" style="left:702.0px;top:226.8px;font-size:8.5px;color:#555;font-weight:400;font-family:'Liberation Serif'">&#937;</div>
<div class="t" style="left:713.0px;top:228.3px;font-size:6.2px;color:#444;font-weight:400;">Symbol</div>
<svg style="left:738px;top:230px" width="4" height="3"><path d="M0 0 H3.5 L1.75 2Z" fill="#555"/></svg>
<div class="t" style="left:716.0px;top:252.8px;font-size:6.2px;color:#555;font-weight:400;">Symbols</div>
<div class="a" style="left:758px;top:213px;width:0.7px;height:45px;background:#e0e0e0;"></div>
<svg style="left:814px;top:254px" width="6" height="4"><path d="M0.5 3.5 L3 1 L5.5 3.5" fill="none" stroke="#555" stroke-width="0.9"/></svg>
<div class="t" style="left:168.5px;top:265.4px;font-size:6px;color:#555;font-weight:700;">L</div>
<div class="a" style="left:224px;top:263.5px;width:485px;height:9.5px;background:#f8f8f8;"></div>
<svg style="left:215px;top:262px" width="560" height="12"><rect x="7.9" y="4.5" width="0.9" height="2.5" fill="#777"/><rect x="16.0" y="5.5" width="0.9" height="1" fill="#777"/><rect x="24.1" y="5.5" width="0.9" height="1" fill="#777"/><rect x="32.3" y="5.5" width="0.9" height="1" fill="#777"/><rect x="40.4" y="4.5" width="0.9" height="2.5" fill="#777"/><rect x="48.5" y="5.5" width="0.9" height="1" fill="#777"/><rect x="56.6" y="5.5" width="0.9" height="1" fill="#777"/><rect x="64.7" y="5.5" width="0.9" height="1" fill="#777"/><rect x="72.9" y="4.5" width="0.9" height="2.5" fill="#777"/><rect x="81.0" y="5.5" width="0.9" height="1" fill="#777"/><rect x="89.1" y="5.5" width="0.9" height="1" fill="#777"/><rect x="97.2" y="5.5" width="0.9" height="1" fill="#777"/><rect x="105.3" y="4.5" width="0.9" height="2.5" fill="#777"/><rect x="113.5" y="5.5" width="0.9" height="1" fill="#777"/><rect x="121.6" y="5.5" width="0.9" height="1" fill="#777"/><rect x="129.7" y="5.5" width="0.9" height="1" fill="#777"/><rect x="137.8" y="4.5" width="0.9" height="2.5" fill="#777"/><rect x="145.9" y="5.5" width="0.9" height="1" fill="#777"/><rect x="154.1" y="5.5" width="0.9" height="1" fill="#777"/><rect x="162.2" y="5.5" width="0.9" height="1" fill="#777"/><rect x="170.3" y="4.5" width="0.9" height="2.5" fill="#777"/><rect x="178.4" y="5.5" width="0.9" height="1" fill="#777"/><rect x="186.5" y="5.5" width="0.9" height="1" fill="#777"/><rect x="194.7" y="5.5" width="0.9" height="1" fill="#777"/><rect x="202.8" y="4.5" width="0.9" height="2.5" fill="#777"/><rect x="210.9" y="5.5" width="0.9" height="1" fill="#777"/><rect x="219.0" y="5.5" width="0.9" height="1" fill="#777"/><rect x="227.1" y="5.5" width="0.9" height="1" fill="#777"/><rect x="235.3" y="4.5" width="0.9" height="2.5" fill="#777"/><rect x="243.4" y="5.5" width="0.9" height="1" fill="#777"/><rect x="251.5" y="5.5" width="0.9" height="1" fill="#777"/><rect x="259.6" y="5.5" width="0.9" height="1" fill="#777"/><rect x="267.7" y="4.5" width="0.9" height="2.5" fill="#777"/><rect x="275.9" y="5.5" width="0.9" height="1" fill="#777"/><rect x="284.0" y="5.5" width="0.9" height="1" fill="#777"/><rect x="292.1" y="5.5" width="0.9" height="1" fill="#777"/><rect x="300.2" y="4.5" width="0.9" height="2.5" fill="#777"/><rect x="308.3" y="5.5" width="0.9" height="1" fill="#777"/><rect x="316.5" y="5.5" width="0.9" height="1" fill="#777"/><rect x="324.6" y="5.5" width="0.9" height="1" fill="#777"/><rect x="332.7" y="4.5" width="0.9" height="2.5" fill="#777"/><rect x="340.8" y="5.5" width="0.9" height="1" fill="#777"/><rect x="348.9" y="5.5" width="0.9" height="1" fill="#777"/><rect x="357.1" y="5.5" width="0.9" height="1" fill="#777"/><rect x="365.2" y="4.5" width="0.9" height="2.5" fill="#777"/><rect x="373.3" y="5.5" width="0.9" height="1" fill="#777"/><rect x="381.4" y="5.5" width="0.9" height="1" fill="#777"/><rect x="389.5" y="5.5" width="0.9" height="1" fill="#777"/><rect x="397.7" y="4.5" width="0.9" height="2.5" fill="#777"/><rect x="405.8" y="5.5" width="0.9" height="1" fill="#777"/><rect x="413.9" y="5.5" width="0.9" height="1" fill="#777"/><rect x="422.0" y="5.5" width="0.9" height="1" fill="#777"/><rect x="430.1" y="4.5" width="0.9" height="2.5" fill="#777"/><rect x="438.3" y="5.5" width="0.9" height="1" fill="#777"/><rect x="446.4" y="5.5" width="0.9" height="1" fill="#777"/><rect x="454.5" y="5.5" width="0.9" height="1" fill="#777"/><rect x="462.6" y="4.5" width="0.9" height="2.5" fill="#777"/><rect x="470.7" y="5.5" width="0.9" height="1" fill="#777"/><rect x="478.9" y="5.5" width="0.9" height="1" fill="#777"/><rect x="487.0" y="5.5" width="0.9" height="1" fill="#777"/><rect x="495.1" y="4.5" width="0.9" height="2.5" fill="#777"/><rect x="503.2" y="5.5" width="0.9" height="1" fill="#777"/><rect x="511.3" y="5.5" width="0.9" height="1" fill="#777"/><rect x="519.5" y="5.5" width="0.9" height="1" fill="#777"/><rect x="527.6" y="4.5" width="0.9" height="2.5" fill="#777"/><rect x="535.7" y="5.5" width="0.9" height="1" fill="#777"/><rect x="543.8" y="5.5" width="0.9" height="1" fill="#777"/><rect x="551.9" y="5.5" width="0.9" height="1" fill="#777"/></svg>
<svg style="left:283px;top:261.5px" width="10" height="13"><path d="M1 0.5 H9 L5 5.5 Z M5 5.5 L9 9 H1Z" fill="#fff" stroke="#777" stroke-width="0.6"/><rect x="1" y="9" width="8" height="3.5" fill="#fff" stroke="#777" stroke-width="0.6"/></svg>
<svg style="left:706px;top:268px" width="8" height="6"><path d="M0.5 5.5 Q4 -1 7.5 5.5Z" fill="#fff" stroke="#777" stroke-width="0.6"/></svg>
<div class="a" style="left:165px;top:273.5px;width:665px;height:257px;background:#ececec;"></div>
<div class="a" style="left:167px;top:273.5px;width:10px;height:257px;background:#e8e8e8;"></div>
<div class="a" style="left:168px;top:319px;width:8px;height:211px;background:#fff;"></div>
<svg style="left:167px;top:274px" width="10" height="256"><rect x="4.5" y="3.5" width="1" height="0.9" fill="#777"/><rect x="3.5" y="11.6" width="2.5" height="0.9" fill="#777"/><rect x="4.5" y="19.7" width="1" height="0.9" fill="#777"/><rect x="4.5" y="27.9" width="1" height="0.9" fill="#777"/><rect x="4.5" y="36.0" width="1" height="0.9" fill="#777"/><rect x="3.5" y="44.1" width="2.5" height="0.9" fill="#777"/><rect x="4.5" y="52.2" width="1" height="0.9" fill="#777"/><rect x="4.5" y="60.3" width="1" height="0.9" fill="#777"/><rect x="4.5" y="68.5" width="1" height="0.9" fill="#777"/><rect x="3.5" y="76.6" width="2.5" height="0.9" fill="#777"/><rect x="4.5" y="84.7" width="1" height="0.9" fill="#777"/><rect x="4.5" y="92.8" width="1" height="0.9" fill="#777"/><rect x="4.5" y="100.9" width="1" height="0.9" fill="#777"/><rect x="3.5" y="109.1" width="2.5" height="0.9" fill="#777"/><rect x="4.5" y="117.2" width="1" height="0.9" fill="#777"/><rect x="4.5" y="125.3" width="1" height="0.9" fill="#777"/><rect x="4.5" y="133.4" width="1" height="0.9" fill="#777"/><rect x="3.5" y="141.5" width="2.5" height="0.9" fill="#777"/><rect x="4.5" y="149.7" width="1" height="0.9" fill="#777"/><rect x="4.5" y="157.8" width="1" height="0.9" fill="#777"/><rect x="4.5" y="165.9" width="1" height="0.9" fill="#777"/><rect x="3.5" y="174.0" width="2.5" height="0.9" fill="#777"/><rect x="4.5" y="182.1" width="1" height="0.9" fill="#777"/><rect x="4.5" y="190.3" width="1" height="0.9" fill="#777"/><rect x="4.5" y="198.4" width="1" height="0.9" fill="#777"/><rect x="3.5" y="206.5" width="2.5" height="0.9" fill="#777"/><rect x="4.5" y="214.6" width="1" height="0.9" fill="#777"/><rect x="4.5" y="222.7" width="1" height="0.9" fill="#777"/><rect x="4.5" y="230.9" width="1" height="0.9" fill="#777"/><rect x="3.5" y="239.0" width="2.5" height="0.9" fill="#777"/><rect x="4.5" y="247.1" width="1" height="0.9" fill="#777"/><rect x="4.5" y="255.2" width="1" height="0.9" fill="#777"/></svg>
<div class="a" style="left:224px;top:273.5px;width:551px;height:257px;background:#fff;border-left:1px solid #d0d0d0;border-right:1px solid #d8d8d8"></div>
<div class="a" style="left:288px;top:318.5px;width:0.9px;height:12px;background:#333;"></div>
<div class="a" style="left:165px;top:530px;width:665px;height:12.5px;background:#f0f0f0;"></div>
<div class="t" style="left:171.2px;top:533.8px;font-size:5.9px;color:#444;font-weight:400;">Page 1 of 1</div>
<div class="t" style="left:211.0px;top:533.8px;font-size:5.9px;color:#444;font-weight:400;">0 words</div>
<div class="t" style="left:242.5px;top:533.8px;font-size:5.9px;color:#444;font-weight:400;">English (United States)</div>
<div class="t" style="left:312.0px;top:533.7px;font-size:6px;color:#444;font-weight:400;">Text Predictions: On</div>
<svg style="left:375px;top:532px" width="8" height="9"><circle cx="4" cy="1.5" r="1.2" fill="none" stroke="#555" stroke-width="0.6"/><path d="M0.5 3.5 H7.5 M4 3 V6 L2 8.5 M4 6 L6 8.5" fill="none" stroke="#555" stroke-width="0.7"/></svg>
<div class="t" style="left:384.5px;top:533.7px;font-size:6px;color:#444;font-weight:400;">Accessibility: Good to go</div>
<svg style="left:637px;top:532px" width="8" height="8"><path d="M0.5 2 V0.5 H2 M6 0.5 H7.5 V2 M7.5 6 V7.5 H6 M2 7.5 H0.5 V6" fill="none" stroke="#555" stroke-width="0.7"/><rect x="2.5" y="2.5" width="3" height="3" fill="none" stroke="#555" stroke-width="0.6"/></svg>
<div class="t" style="left:645.5px;top:533.7px;font-size:6px;color:#444;font-weight:400;">Focus</div>
<svg style="left:676px;top:532px" width="8" height="8"><path d="M0.5 1 H3.5 L4 2 L4.5 1 H7.5 V7 H0.5Z M4 2 V7" fill="none" stroke="#555" stroke-width="0.7"/></svg>
<div class="a" style="left:688px;top:531px;width:18px;height:11px;background:#dcdcdc;"></div>
<svg style="left:693px;top:532px" width="8" height="9"><rect x="0.5" y="0.5" width="7" height="8" fill="none" stroke="#555" stroke-width="0.8"/><path d="M2 3 H6 M2 5 H6" stroke="#555" stroke-width="0.6"/></svg>
<svg style="left:713px;top:532px" width="9" height="9"><rect x="0.5" y="0.5" width="7" height="8" fill="none" stroke="#555" stroke-width="0.7"/><circle cx="6" cy="6" r="2.5" fill="#555"/></svg>
<div class="a" style="left:734px;top:536px;width:4px;height:0.8px;background:#777;"></div>
<div class="a" style="left:741px;top:536px;width:51px;height:0.8px;background:#888;"></div>
<div class="a" style="left:768px;top:533px;width:2.2px;height:6px;background:#555;"></div>
<svg style="left:795px;top:533px" width="6" height="6"><path d="M3 0.5 V5.5 M0.5 3 H5.5" stroke="#777" stroke-width="0.7"/></svg>
<div class="t" style="left:805.5px;top:533.7px;font-size:6px;color:#444;font-weight:400;">130%</div>
<div class="a" style="left:165px;top:542px;width:666px;height:1px;background:#fafafa;"></div>
<div class="a" style="left:333.5px;top:197.5px;width:329px;height:312px;background:#f0f0f0;border:1px solid #8a8a8a;box-shadow:0 2px 6px rgba(0,0,0,0.25)"></div>
<div class="a" style="left:334.5px;top:198.5px;width:327px;height:15.5px;background:#fff;"></div>
<div class="t" style="left:338.0px;top:202.6px;font-size:6.1px;color:#333;font-weight:400;">Insert Chart</div>
<div class="t" style="left:624.5px;top:202.5px;font-size:6.5px;color:#444;font-weight:400;">?</div>
<svg style="left:647px;top:203px" width="7" height="7"><path d="M0.5 0.5 L6.5 6.5 M6.5 0.5 L0.5 6.5" stroke="#444" stroke-width="0.8"/></svg>
<div class="a" style="left:337px;top:232.5px;width:320.5px;height:258.5px;background:#fff;border:1px solid #dcdcdc"></div>
<div class="a" style="left:337.2px;top:220px;width:33px;height:13.5px;background:#fff;border:1px solid #dcdcdc;border-bottom:none"></div>
<div class="t" style="left:340.0px;top:222.6px;font-size:5.8px;color:#333;font-weight:400;">All Charts</div>
<div class="a" style="left:409.2px;top:239px;width:0.8px;height:244px;background:#e0e0e0;"></div>
<div class="a" style="left:343.5px;top:289.2px;width:60px;height:12.3px;background:#a8c0e0;"></div>
<div class="t" style="left:359.7px;top:242.4px;font-size:6.2px;color:#555;font-weight:400;">Recent</div>
<div class="t" style="left:359.7px;top:254.9px;font-size:6.2px;color:#555;font-weight:400;">Templates</div>
<div class="t" style="left:359.7px;top:267.4px;font-size:6.2px;color:#555;font-weight:400;">Column</div>
<div class="t" style="left:359.7px;top:279.9px;font-size:6.2px;color:#555;font-weight:400;">Line</div>
<div class="t" style="left:359.7px;top:292.4px;font-size:6.2px;color:#555;font-weight:400;">Pie</div>
<div class="t" style="left:359.7px;top:304.9px;font-size:6.2px;color:#555;font-weight:400;">Bar</div>
<div class="t" style="left:359.7px;top:317.4px;font-size:6.2px;color:#555;font-weight:400;">Area</div>
<div class="t" style="left:359.7px;top:329.9px;font-size:6.2px;color:#555;font-weight:400;">X Y (Scatter)</div>
<div class="t" style="left:359.7px;top:342.4px;font-size:6.2px;color:#555;font-weight:400;">Map</div>
<div class="t" style="left:359.7px;top:354.9px;font-size:6.2px;color:#555;font-weight:400;">Stock</div>
<div class="t" style="left:359.7px;top:367.4px;font-size:6.2px;color:#555;font-weight:400;">Surface</div>
<div class="t" style="left:359.7px;top:379.9px;font-size:6.2px;color:#555;font-weight:400;">Radar</div>
<div class="t" style="left:359.7px;top:392.4px;font-size:6.2px;color:#555;font-weight:400;">Treemap</div>
<div class="t" style="left:359.7px;top:404.9px;font-size:6.2px;color:#555;font-weight:400;">Sunburst</div>
<div class="t" style="left:359.7px;top:417.4px;font-size:6.2px;color:#555;font-weight:400;">Histogram</div>
<div class="t" style="left:359.7px;top:429.9px;font-size:6.2px;color:#555;font-weight:400;">Box &amp; Whisker</div>
<div class="t" style="left:359.7px;top:442.4px;font-size:6.2px;color:#555;font-weight:400;">Waterfall</div>
<div class="t" style="left:359.7px;top:454.9px;font-size:6.2px;color:#555;font-weight:400;">Funnel</div>
<div class="t" style="left:359.7px;top:467.4px;font-size:6.2px;color:#555;font-weight:400;">Combo</div>
<svg style="left:344px;top:238px" width="12" height="242"><path d="M3 3 A4 4 0 1 1 3 9" fill="none" stroke="#555" stroke-width="0.9"/><path d="M1 1 V5 H5" fill="none" stroke="#555" stroke-width="0.9"/><rect x="1.5" y="16.0" width="9" height="7.5" fill="none" stroke="#555" stroke-width="0.9"/><path d="M1.5 18.0 H10.5" stroke="#555" stroke-width="0.8"/><rect x="2" y="29.0" width="2" height="7" fill="#41a5ee"/><rect x="5" y="27.0" width="2" height="9" fill="#41a5ee"/><rect x="8" y="31.0" width="2" height="5" fill="#555"/><path d="M1 27.0 V36.5 H11" fill="none" stroke="#555" stroke-width="0.8"/><path d="M1 39.5 V49.0 H11" fill="none" stroke="#555" stroke-width="0.8"/><path d="M2 46.5 L5 42.5 L7 45.5 L10 41.5" fill="none" stroke="#41a5ee" stroke-width="1"/><path d="M2 44.5 L5 44.5 L7 42.5 L10 44.5" fill="none" stroke="#555" stroke-width="0.7"/><circle cx="6" cy="56.5" r="4.3" fill="#fff" stroke="#555" stroke-width="0.9"/><path d="M6 56.5 V52.2 A4.3 4.3 0 0 0 2 58.0Z" fill="#888"/><rect x="1.5" y="65.5" width="8" height="2.5" fill="#41a5ee"/><rect x="1.5" y="69.0" width="6" height="2.5" fill="#555"/><path d="M1 64.5 V74.0 H11" fill="none" stroke="#555" stroke-width="0.8"/><path d="M1 86.0 L1 80.0 L4 83.0 L7 79.0 L10 82.0 V86.0Z" fill="#41a5ee"/><path d="M1 89.5 V99.0 H11" fill="none" stroke="#555" stroke-width="0.8"/><circle cx="4" cy="92.5" r="1.1" fill="#41a5ee"/><circle cx="8" cy="92.5" r="1.1" fill="#555"/><circle cx="4" cy="96.0" r="1.1" fill="#41a5ee"/><circle cx="8" cy="96.0" r="1.1" fill="#555"/><circle cx="6" cy="106.0" r="4" fill="none" stroke="#555" stroke-width="0.9"/><path d="M3 104.0 Q6 106.0 5 109.0 L8 107.0" fill="#41a5ee"/><path d="M2 111.5 H10" stroke="#555" stroke-width="0.9"/><path d="M1 114.5 V124.0 H11" fill="none" stroke="#555" stroke-width="0.8"/><path d="M3 117.5 V122.5 M6 115.5 V122.5 M9 117.5 V122.5" stroke="#555" stroke-width="1.4"/><path d="M1 135.0 L4 128.0 L10 127.0 L8 134.0Z" fill="none" stroke="#555" stroke-width="0.8"/><path d="M3 132.0 L9 130.0" stroke="#41a5ee" stroke-width="1.2"/><path d="M6 139.5 L10.5 143.0 L8.8 148.0 H3.2 L1.5 143.0Z" fill="none" stroke="#555" stroke-width="0.8"/><path d="M6 141.5 L9 143.5 L7.5 146.5 H4.5 L3 143.5Z" fill="#41a5ee"/><rect x="1" y="152.5" width="10" height="9" fill="#41a5ee"/><path d="M6 152.5 V161.5 M6 156.0 H11 M8.5 156.0 V161.5" stroke="#fff" stroke-width="0.8"/><circle cx="6" cy="169.0" r="4.5" fill="#41a5ee"/><circle cx="6" cy="169.0" r="2" fill="#fff"/><path d="M6 167.0 V164.5" stroke="#fff" stroke-width="0.6"/><path d="M1 177.0 V186.5 H11" fill="none" stroke="#555" stroke-width="0.8"/><rect x="2.5" y="180.0" width="2" height="6" fill="#41a5ee"/><rect x="5" y="178.0" width="2" height="8" fill="#41a5ee"/><rect x="7.5" y="182.0" width="2" height="4" fill="#41a5ee"/><path d="M3 189.5 V199.0 M9 189.5 V199.0" stroke="#555" stroke-width="0.8"/><rect x="1.5" y="191.5" width="3" height="3.5" fill="#41a5ee"/><rect x="7.5" y="192.5" width="3" height="3" fill="none" stroke="#41a5ee" stroke-width="0.8"/><path d="M1 202.0 V211.5 H11" fill="none" stroke="#555" stroke-width="0.8"/><rect x="2.5" y="206.0" width="2" height="5" fill="#555"/><rect x="5" y="204.0" width="2" height="3" fill="#41a5ee"/><rect x="7.5" y="202.0" width="2" height="9" fill="#555"/><rect x="1" y="215.5" width="10" height="2" fill="#41a5ee"/><rect x="2.5" y="218.5" width="7" height="2" fill="#41a5ee"/><rect x="4" y="221.5" width="4" height="2" fill="#41a5ee"/><path d="M1 227.0 V236.5 H11" fill="none" stroke="#555" stroke-width="0.8"/><rect x="3" y="231.0" width="2" height="5" fill="#41a5ee"/><rect x="7" y="229.0" width="2" height="7" fill="#41a5ee"/><path d="M2 232.0 L6 228.0 L10 231.0" fill="none" stroke="#555" stroke-width="0.8"/></svg>
<svg style="left:416px;top:238px" width="150" height="32"><circle cx="13.5" cy="15.5" r="11.5" fill="#fff" stroke="#555" stroke-width="0.9"/><path d="M13.5 15.5 V4 A11.5 11.5 0 0 1 20.5 24.6Z" fill="#7ab8e8" stroke="#555" stroke-width="0.8"/><rect x="29" y="1" width="28.7" height="29" fill="#b8cce8" stroke="#8aa4c8" stroke-width="0.8"/><path d="M32 16 V19 A11.5 6.5 0 0 0 55 19 V16" fill="#7ab8e8" stroke="#555" stroke-width="0.7"/><ellipse cx="43.5" cy="15.5" rx="11.5" ry="6.5" fill="#7ab8e8" stroke="#555" stroke-width="0.8"/><path d="M43.5 15.5 L43 9 A11.5 6.5 0 0 1 53 19Z" fill="#d8d8d8" stroke="#555" stroke-width="0.7"/><circle cx="67" cy="16" r="6" fill="#7ab8e8" stroke="#555" stroke-width="0.6"/><path d="M67 16 L72 12 A6 6 0 0 1 72 20Z" fill="#fff" stroke="#555" stroke-width="0.6"/><path d="M71 10.5 L80 12 M71 21.5 L80 19" stroke="#555" stroke-width="0.6"/><circle cx="80" cy="15.5" r="3.8" fill="#fff" stroke="#555" stroke-width="0.6"/><path d="M80 15.5 V11.7 M80 15.5 L83 17.5" stroke="#555" stroke-width="0.6"/><circle cx="96" cy="16" r="6" fill="#7ab8e8" stroke="#555" stroke-width="0.6"/><path d="M96 16 L101 12 A6 6 0 0 1 101 20Z" fill="#fff" stroke="#555" stroke-width="0.6"/><rect x="106" y="12" width="7" height="8" fill="#fff" stroke="#555" stroke-width="0.6"/><rect x="109.5" y="12" width="3.5" height="8" fill="#7ab8e8" stroke="#555" stroke-width="0.6"/><path d="M101 11 L106 12 M101 21 L106 20 M109.5 14.7 H113 M109.5 17.3 H113" stroke="#555" stroke-width="0.6"/><circle cx="130.5" cy="15.5" r="11.5" fill="#fff" stroke="#555" stroke-width="0.8"/><path d="M130.5 4 A11.5 11.5 0 0 1 135.5 25.8 L133.5 21.5 A7 7 0 0 0 130.5 8.5Z" fill="#7ab8e8" stroke="#555" stroke-width="0.6"/><circle cx="130.5" cy="15.5" r="7" fill="#fff" stroke="#555" stroke-width="0.8"/><path d="M130.5 4 A11.5 11.5 0 0 1 135.5 25.8 L133.5 21.5 A7 7 0 0 0 130.5 8.5Z" fill="#7ab8e8" stroke="#555" stroke-width="0.6"/></svg>
<div class="a" style="left:418px;top:271px;width:233.5px;height:0.8px;background:#dcdcdc;"></div>
<div class="t" style="left:416.7px;top:276.5px;font-size:7.7px;color:#333;font-weight:400;">3-D Pie</div>
<div class="a" style="left:416px;top:288px;width:116.5px;height:70.5px;background:#fff;border:2px solid #bcd2f0"></div>
<div class="t" style="left:465.5px;top:293.3px;font-size:3.8px;color:#777;font-weight:400;">Chart Title</div>
<svg style="left:430px;top:298px" width="90" height="56"><polygon points="83.30,21.00 83.19,22.35 82.88,23.70 82.35,25.04 81.62,26.35 80.69,27.63 79.56,28.88 78.24,30.08 76.73,31.24 75.05,32.34 73.21,33.38 71.20,34.35 69.05,35.25 66.77,36.08 64.36,36.82 61.84,37.48 59.23,38.05 56.54,38.53 53.77,38.92 50.96,39.21 48.11,39.40 45.23,39.49 42.35,39.48 39.48,39.38 36.64,39.17 33.83,38.87 31.08,38.47 28.39,37.98 25.79,37.39 23.29,36.72 20.90,35.97 20.90,44.97 23.29,45.72 25.79,46.39 28.39,46.98 31.08,47.47 33.83,47.87 36.64,48.17 39.48,48.38 42.35,48.48 45.23,48.49 48.11,48.40 50.96,48.21 53.77,47.92 56.54,47.53 59.23,47.05 61.84,46.48 64.36,45.82 66.77,45.08 69.05,44.25 71.20,43.35 73.21,42.38 75.05,41.34 76.73,40.24 78.24,39.08 79.56,37.88 80.69,36.63 81.62,35.35 82.35,34.04 82.88,32.70 83.19,31.35 83.30,30.00" fill="#0e3247"/><polygon points="20.90,35.97 19.91,35.62 18.95,35.25 18.01,34.88 17.10,34.49 16.21,34.08 15.35,33.66 14.52,33.23 13.72,32.79 12.95,32.34 12.21,31.87 11.50,31.40 10.82,30.91 10.17,30.42 9.56,29.91 8.98,29.40 8.44,28.88 7.93,28.35 7.46,27.81 7.02,27.27 6.62,26.72 6.26,26.16 5.93,25.60 5.65,25.04 5.40,24.47 5.18,23.89 5.01,23.32 4.87,22.74 4.78,22.16 4.72,21.58 4.70,21.00 4.70,30.00 4.72,30.58 4.78,31.16 4.87,31.74 5.01,32.32 5.18,32.89 5.40,33.47 5.65,34.04 5.93,34.60 6.26,35.16 6.62,35.72 7.02,36.27 7.46,36.81 7.93,37.35 8.44,37.88 8.98,38.40 9.56,38.91 10.17,39.42 10.82,39.91 11.50,40.40 12.21,40.87 12.95,41.34 13.72,41.79 14.52,42.23 15.35,42.66 16.21,43.08 17.10,43.49 18.01,43.88 18.95,44.25 19.91,44.62 20.90,44.97" fill="#b05420"/><polygon points="44,21 44.00,2.50 48.93,2.65 53.77,3.08 58.47,3.80 62.93,4.79 67.10,6.03 70.90,7.51 74.28,9.21 77.18,11.09 79.56,13.12 81.38,15.28 82.60,17.53 83.22,19.84 83.22,22.16 82.60,24.47 81.38,26.72 79.56,28.88 77.18,30.91 74.28,32.79 70.90,34.49 67.10,35.97 62.93,37.21 58.47,38.20 53.77,38.92 48.93,39.35 44.00,39.50 39.07,39.35 34.23,38.92 29.53,38.20 25.07,37.21 20.90,35.97" fill="#1b5c80" stroke="#fff" stroke-width="0.25"/><polygon points="44,21 20.90,35.97 19.29,35.38 17.74,34.76 16.26,34.10 14.86,33.41 13.53,32.68 12.29,31.93 11.13,31.14 10.06,30.32 9.08,29.49 8.19,28.62 7.40,27.74 6.71,26.84 6.12,25.92 5.63,24.99 5.24,24.05 4.96,23.10 4.78,22.15 4.70,21.19 4.73,20.24 4.87,19.28 5.11,18.33 5.46,17.39 5.91,16.45 6.46,15.53 7.11,14.62 7.86,13.73 8.71,12.86 9.65,12.01 10.68,11.19 11.81,10.39" fill="#e07032" stroke="#fff" stroke-width="0.25"/><polygon points="44,21 11.81,10.39 12.21,10.13 12.61,9.87 13.03,9.61 13.46,9.36 13.89,9.11 14.34,8.86 14.79,8.62 15.26,8.38 15.73,8.15 16.21,7.92 16.70,7.69 17.20,7.47 17.70,7.25 18.22,7.04 18.74,6.83 19.27,6.62 19.80,6.42 20.35,6.23 20.90,6.03 21.46,5.85 22.02,5.66 22.60,5.48 23.17,5.31 23.76,5.14 24.35,4.98 24.95,4.82 25.55,4.67 26.16,4.52 26.77,4.37 27.39,4.23" fill="#247a2a" stroke="#fff" stroke-width="0.25"/><polygon points="44,21 27.39,4.23 27.91,4.12 28.43,4.01 28.96,3.91 29.49,3.81 30.02,3.71 30.56,3.62 31.10,3.53 31.64,3.44 32.18,3.36 32.73,3.28 33.28,3.20 33.83,3.13 34.38,3.06 34.94,3.00 35.49,2.94 36.05,2.88 36.61,2.83 37.18,2.78 37.74,2.74 38.30,2.70 38.87,2.66 39.44,2.63 40.01,2.60 40.57,2.57 41.14,2.55 41.71,2.53 42.29,2.52 42.86,2.51 43.43,2.50 44.00,2.50" fill="#1ea0da" stroke="#fff" stroke-width="0.25"/></svg>
<svg style="left:452px;top:350.5px" width="48" height="4"><rect x="0" y="1" width="1.5" height="1.5" fill="#1b5c80"/><rect x="2.5" y="1.2" width="6" height="1" fill="#bbb"/><rect x="12" y="1" width="1.5" height="1.5" fill="#e07032"/><rect x="14.5" y="1.2" width="6" height="1" fill="#bbb"/><rect x="24" y="1" width="1.5" height="1.5" fill="#247a2a"/><rect x="26.5" y="1.2" width="6" height="1" fill="#bbb"/><rect x="36" y="1" width="1.5" height="1.5" fill="#1ea0da"/><rect x="38.5" y="1.2" width="6" height="1" fill="#bbb"/></svg>
<div class="a" style="left:577px;top:494px;width:38px;height:10.5px;background:#e0eefa;border:1px solid #3b82d0"></div>
<div class="a" style="left:620.2px;top:494px;width:38px;height:10.5px;background:#e1e1e1;border:1px solid #adadad"></div>
<div class="t" style="left:590.5px;top:496.9px;font-size:6px;color:#333;font-weight:400;">OK</div>
<div class="t" style="left:629.0px;top:496.9px;font-size:6px;color:#333;font-weight:400;">Cancel</div>
<svg style="left:654px;top:503px" width="6" height="6"><path d="M5 1 V5 H1 M5 3 V5 H3" fill="none" stroke="#bbb" stroke-width="0.6"/></svg>
<svg style="left:259px;top:208px" width="400" height="290"><path d="M4 83 H69 Q72 83 72 86 V85 L84 88.4 L72 93 V104.3 Q72 107.3 69 107.3 H4 Q1 107.3 1 104.3 V86 Q1 83 4 83Z" fill="#f00"/><path d="M208.5 1.3 H274.3 Q277.3 1.3 277.3 4.3 V22.7 Q277.3 25.7 274.3 25.7 H231 L216.8 33 L222 25.7 H208.5 Q205.5 25.7 205.5 22.7 V4.3 Q205.5 1.3 208.5 1.3Z" fill="#f00"/><path d="M322.9 249 H370.5 Q373.5 249 373.5 252 V271 Q373.5 274 370.5 274 H341 L335.3 282.5 L330 274 H322.9 Q319.9 274 319.9 271 V252 Q319.9 249 322.9 249Z" fill="#f00"/></svg>
<div class="t" style="left:282.6px;top:293.8px;font-size:8.3px;color:#fff;font-weight:400;">Select</div>
<div class="t" style="left:273.6px;top:304.0px;font-size:8.3px;color:#fff;font-weight:400;">a chart type</div>
<div class="t" style="left:488.0px;top:211.4px;font-size:8.3px;color:#fff;font-weight:400;">Select</div>
<div class="t" style="left:470.9px;top:221.7px;font-size:8.3px;color:#fff;font-weight:400;">a chart variation</div>
<div class="t" style="left:588.5px;top:460.7px;font-size:8.3px;color:#fff;font-weight:400;">Click OK</div>
<div class="t" style="left:591.5px;top:470.8px;font-size:8.3px;color:#fff;font-weight:400;">to insert</div>
<div class="a" style="left:578.5px;top:494.5px;width:16px;height:16px;background:rgba(230,230,90,0.6);border-radius:50%"></div>
<svg style="left:586px;top:502px" width="8" height="12"><path d="M0.5 0.5 V9.5 L2.8 7.5 L4.5 11 L5.8 10.3 L4.2 7 H7.2Z" fill="#fff" stroke="#333" stroke-width="0.6"/></svg>
<!-- /SLIDE -->

<!-- MAIN_CONTENT -->

<!-- TIMELINE -->
<!-- TIMELINE_CONTENT -->
<div class="a" style="left:0px;top:585.5px;width:874px;height:35px;background:#3d3d3e;"></div>
<div class="t" style="left:4.5px;top:597.3px;font-size:10.6px;color:#f0f0f0;font-weight:700;">TIMELINE</div>
<svg style="left:204px;top:594px" width="18" height="18"><rect x="5.5" y="5.5" width="11.5" height="11.5" fill="#c8c8c8"/><rect x="-0.5" y="-0.5" width="13" height="13" fill="#3d3d3e"/><rect x="0.5" y="0.5" width="11" height="11" fill="#1e7fd0"/></svg>
<div class="a" style="left:231px;top:592px;width:1.2px;height:23px;background:#6a6a6a;"></div>
<div class="a" style="left:303px;top:592px;width:1.2px;height:23px;background:#6a6a6a;"></div>
<div class="a" style="left:348.5px;top:592px;width:1.2px;height:23px;background:#6a6a6a;"></div>
<div class="a" style="left:437px;top:592px;width:1.2px;height:23px;background:#6a6a6a;"></div>
<div class="a" style="left:580px;top:592px;width:1.2px;height:23px;background:#6a6a6a;"></div>
<div class="a" style="left:851px;top:592px;width:1.2px;height:23px;background:#6a6a6a;"></div>
<svg style="left:241px;top:597px" width="12" height="13"><path d="M0.5 0.5 L11.5 6.5 L0.5 12.5Z" fill="#3cb043"/></svg>
<svg style="left:262px;top:601px" width="7" height="4"><path d="M0 0 H6 L3 3.5Z" fill="#f0f0f0"/></svg>
<div class="a" style="left:279px;top:597.5px;width:12px;height:11.5px;background:#1e7fd0"></div>
<svg style="left:311px;top:595px" width="16" height="16"><circle cx="8" cy="8" r="7.8" fill="#e8161e"/><rect x="6.3" y="3" width="3.4" height="6" rx="1.7" fill="#1e1e1e"/><path d="M8 9 V11.5 M5.5 11.5 H10.5" stroke="#1e1e1e" stroke-width="1.2"/></svg>
<svg style="left:334px;top:601px" width="7" height="4"><path d="M0 0 H6 L3 3.5Z" fill="#f0f0f0"/></svg>
<svg style="left:356px;top:594px" width="18" height="18"><circle cx="7" cy="7" r="5.8" fill="none" stroke="#d8d8d8" stroke-width="1.5"/><path d="M11 11 L16.5 16.5" stroke="#d8d8d8" stroke-width="2.6" stroke-linecap="round"/><path d="M4.5 6 V4.5 H6 M9.5 8 V9.5 H8 M4.5 4.5 L9.5 9.5" stroke="#2ab5c0" stroke-width="1" fill="none"/></svg>
<svg style="left:383.5px;top:594px" width="18" height="18"><circle cx="7" cy="7" r="5.8" fill="none" stroke="#d8d8d8" stroke-width="1.5"/><path d="M11 11 L16.5 16.5" stroke="#d8d8d8" stroke-width="2.6" stroke-linecap="round"/><path d="M4 7 H10" stroke="#2ab5c0" stroke-width="1.3"/></svg>
<svg style="left:410px;top:594px" width="18" height="18"><circle cx="7" cy="7" r="5.8" fill="none" stroke="#d8d8d8" stroke-width="1.5"/><path d="M11 11 L16.5 16.5" stroke="#d8d8d8" stroke-width="2.6" stroke-linecap="round"/><path d="M4 7 H10 M7 4 V10" stroke="#2ab5c0" stroke-width="1.3"/></svg>
<svg style="left:445.5px;top:594px" width="17" height="17"><rect x="0.5" y="0.5" width="6" height="6" fill="#6e6e6e"/><rect x="12.5" y="0.5" width="3" height="6" fill="#6e6e6e"/><rect x="5.5" y="9.5" width="7" height="7" fill="#6e6e6e"/><path d="M9 2 V7 M7.5 5.5 L9 7 L10.5 5.5" stroke="#6e6e6e" fill="none"/></svg>
<svg style="left:473px;top:594px" width="17" height="17"><rect x="0.5" y="0.5" width="15" height="6" fill="#6e6e6e"/><path d="M5 0.5 V6.5 M11 0.5 V6.5" stroke="#3d3d3e" stroke-width="0.8"/><rect x="4.5" y="9.5" width="7" height="7" fill="#6e6e6e"/></svg>
<svg style="left:499.5px;top:594px" width="17" height="17"><rect x="0.5" y="0.5" width="6" height="6" fill="#6e6e6e"/><path d="M6.5 6.5 H15.5 M8.5 6.5 V16.5 H13.5 V6.5 M10 8.5 V14.5 M12 8.5 V14.5 M10 5 H12" stroke="#6e6e6e" fill="none" stroke-width="1.1"/><rect x="0.5" y="9.5" width="5" height="5" fill="#6e6e6e"/></svg>
<svg style="left:527px;top:594px" width="17" height="17"><path d="M3.5 0 V13.5 H17 M0 3.5 H13.5 V17" stroke="#6e6e6e" fill="none" stroke-width="1.2"/><rect x="5.5" y="5.5" width="6" height="6" fill="#6e6e6e"/></svg>
<svg style="left:553.5px;top:594px" width="17" height="17"><rect x="5" y="0" width="7" height="7" fill="#1e7fd0"/><path d="M8.5 7 V12 M7 10.5 L8.5 12 L10 10.5" stroke="#1e7fd0" fill="none"/><rect x="0.5" y="10" width="3.5" height="7" fill="#d8d8d8"/><rect x="11" y="10" width="6" height="7" fill="#d8d8d8"/></svg>
<svg style="left:588px;top:594px" width="18" height="18"><path d="M1 3.5 H6 M1 13.5 H6 M1.5 3.5 V13.5 M1 8.5 H4.5 M5.5 3.5 V6 M5.5 11 V13.5" stroke="#e0e0e0" stroke-width="1.4" fill="none"/><path d="M12 3.5 H17 M12 13.5 H17 M16.5 3.5 V13.5 M13.5 8.5 H17 M12.5 3.5 V6 M12.5 11 V13.5" stroke="#1e7fd0" stroke-width="1.4" fill="none"/><path d="M9 3.5 V13.5" stroke="#e85520" stroke-width="1.1" stroke-dasharray="1 1.2"/><path d="M9 0.5 V3.5 M7.5 2 H10.5 M9 13.5 V16.5 M7.5 15 H10.5" stroke="#e85520" stroke-width="1.1"/></svg>
<svg style="left:616px;top:594px" width="18" height="18"><path d="M0 3.5 H5 M0 13.5 H5 M0.5 3.5 V13.5 M0 8.5 H3.5 M4.5 3.5 V6 M4.5 11 V13.5" stroke="#6e6e6e" stroke-width="1.3" fill="none"/><path d="M11 3.5 H16 M11 13.5 H16 M15.5 3.5 V13.5 M12.5 8.5 H16 M11.5 3.5 V6 M11.5 11 V13.5" stroke="#6e6e6e" stroke-width="1.3" fill="none"/><path d="M5.5 8.5 H8.5" stroke="#6e6e6e" stroke-width="1.3"/><path d="M8 6 L10.5 8.5 L8 11Z" fill="#6e6e6e"/></svg>
<svg style="left:643px;top:594px" width="18" height="18"><circle cx="11.5" cy="3.5" r="2" fill="#6e6e6e"/><path d="M5 7.5 L8 5 H11.5 L13 8 L15.5 8.5 M10.5 5.5 L8.5 10.5 L11.5 13 L10.5 16.5 M8.5 10.5 L6.5 13.5 H3" stroke="#6e6e6e" stroke-width="2.2" fill="none" stroke-linejoin="round"/><path d="M0.5 7.5 H3.5 M0 11.5 H3 M0.5 16.5 H7" stroke="#6e6e6e" stroke-width="1"/><path d="M15.5 0 V3 M14 1.5 H17" stroke="#6e6e6e" stroke-width="0.8"/></svg>
<svg style="left:672.5px;top:594px" width="12" height="17"><path d="M6 0.5 Q11.5 8 11.5 11 A5.5 5.5 0 0 1 0.5 11 Q0.5 8 6 0.5Z" fill="#6e6e6e"/></svg>
<svg style="left:695.5px;top:594px" width="17" height="17"><rect x="0.5" y="5.5" width="3" height="6" fill="#6e6e6e"/><path d="M3.5 5.5 L8.5 1 V16 L3.5 11.5Z" fill="#6e6e6e"/><path d="M11 5 Q13 8.5 11 12 M13 3 Q16.5 8.5 13 14" stroke="#6e6e6e" fill="none" stroke-width="1.2"/></svg>
<svg style="left:719px;top:601px" width="7" height="4"><path d="M0 0 H6 L3 3.5Z" fill="#6e6e6e"/></svg>
<svg style="left:734px;top:594.5px" width="17" height="17"><rect x="0.5" y="0.5" width="15.5" height="15.5" fill="none" stroke="#6e6e6e" stroke-width="1.1"/><path d="M3 14 L14 3 V14Z" fill="#6e6e6e"/></svg>
<svg style="left:761px;top:594.5px" width="17" height="17"><rect x="0.5" y="0.5" width="15.5" height="15.5" fill="none" stroke="#6e6e6e" stroke-width="1.1"/><path d="M3 3 L14 14 H3Z" fill="#6e6e6e"/></svg>
<svg style="left:788px;top:594.5px" width="15" height="17"><path d="M1.5 16 V10 M5 16 V7 M8.5 16 V2 M12 16 V6" stroke="#6e6e6e" stroke-width="2"/></svg>
<svg style="left:809px;top:601px" width="7" height="4"><path d="M0 0 H6 L3 3.5Z" fill="#555"/></svg>
<svg style="left:827px;top:594.5px" width="15" height="17"><path d="M3 16 V8 M6.5 16 V4 M10 16 V9" stroke="#555" stroke-width="2"/><path d="M0 1.5 H12" stroke="#555"/></svg>
<svg style="left:861.5px;top:601px" width="7" height="4"><path d="M0 0 H6.5 L3.25 3.5Z" fill="#f0f0f0"/></svg>
<div class="a" style="left:1px;top:620.5px;width:199.5px;height:90.5px;background:#262626;"></div>
<div class="a" style="left:1px;top:620.5px;width:199.5px;height:24.5px;background:#2a2a2a;"></div>
<div class="t" style="left:17.3px;top:627.2px;font-size:12px;color:#e8e8e8;font-weight:400;">Main Timeline</div>
<svg style="left:140px;top:631px" width="11" height="6"><path d="M0 0 H10.5 L5.25 5.5Z" fill="#7a7a7a"/></svg>
<div class="a" style="left:154.5px;top:625px;width:1px;height:15px;background:#3a3a3a;"></div>
<svg style="left:161px;top:627.5px" width="16" height="10"><path d="M0.5 5 Q7.5 -2.5 14.5 5 Q7.5 12.5 0.5 5Z" fill="#d8d8d8"/><circle cx="7.5" cy="5" r="2.6" fill="#2a2a2a"/><circle cx="7.5" cy="5" r="1.1" fill="#d8d8d8"/></svg>
<svg style="left:183.5px;top:626px" width="14" height="13"><path d="M6.5 6 V3.8 A3 3 0 0 1 12.5 3.8 V6" stroke="#8a8a8a" stroke-width="1.3" fill="none"/><rect x="7" y="6" width="6.5" height="6.5" fill="#8a8a8a"/><path d="M2.5 6.5 V4.3 A3 3 0 0 1 8.5 4.3 V6.5" stroke="#d0d0d0" stroke-width="1.3" fill="none"/><rect x="0.5" y="6.5" width="9" height="6.5" fill="#d0d0d0"/><rect x="4.2" y="8.5" width="1.6" height="2.5" fill="#555"/></svg>
<div class="t" style="left:17.3px;top:646.8px;font-size:12px;color:#e8e8e8;font-weight:400;">Shape_5</div>
<svg style="left:161px;top:647px" width="16" height="10"><path d="M0.5 5 Q7.5 -2.5 14.5 5 Q7.5 12.5 0.5 5Z" fill="#d8d8d8"/><circle cx="7.5" cy="5" r="2.6" fill="#2a2a2a"/><circle cx="7.5" cy="5" r="1.1" fill="#d8d8d8"/></svg>
<svg style="left:183.5px;top:645.5px" width="12" height="11"><rect x="0.5" y="4.5" width="7.5" height="6" fill="#d0d0d0"/><path d="M6 4.5 V2.5 A2.5 2.5 0 0 1 11 2.5 V4" stroke="#d0d0d0" stroke-width="1.5" fill="none"/><rect x="3" y="6.5" width="2" height="2" fill="#262626"/></svg>
<div class="t" style="left:17.3px;top:668.6px;font-size:12px;color:#e8e8e8;font-weight:400;">Shape_4</div>
<svg style="left:161px;top:669px" width="16" height="10"><path d="M0.5 5 Q7.5 -2.5 14.5 5 Q7.5 12.5 0.5 5Z" fill="#d8d8d8"/><circle cx="7.5" cy="5" r="2.6" fill="#2a2a2a"/><circle cx="7.5" cy="5" r="1.1" fill="#d8d8d8"/></svg>
<svg style="left:183.5px;top:667.5px" width="12" height="11"><rect x="0.5" y="4.5" width="7.5" height="6" fill="#d0d0d0"/><path d="M6 4.5 V2.5 A2.5 2.5 0 0 1 11 2.5 V4" stroke="#d0d0d0" stroke-width="1.5" fill="none"/><rect x="3" y="6.5" width="2" height="2" fill="#262626"/></svg>
<div class="t" style="left:17.3px;top:690.6px;font-size:12px;color:#e8e8e8;font-weight:400;">Shape_3</div>
<svg style="left:161px;top:691px" width="16" height="10"><path d="M0.5 5 Q7.5 -2.5 14.5 5 Q7.5 12.5 0.5 5Z" fill="#d8d8d8"/><circle cx="7.5" cy="5" r="2.6" fill="#2a2a2a"/><circle cx="7.5" cy="5" r="1.1" fill="#d8d8d8"/></svg>
<svg style="left:183.5px;top:689.5px" width="12" height="11"><rect x="0.5" y="4.5" width="7.5" height="6" fill="#d0d0d0"/><path d="M6 4.5 V2.5 A2.5 2.5 0 0 1 11 2.5 V4" stroke="#d0d0d0" stroke-width="1.5" fill="none"/><rect x="3" y="6.5" width="2" height="2" fill="#262626"/></svg>
<div class="a" style="left:1px;top:645px;width:199.5px;height:1px;background:#3a3a3a;"></div>
<div class="a" style="left:1px;top:662px;width:199.5px;height:1px;background:#3a3a3a;"></div>
<div class="a" style="left:1px;top:684px;width:199.5px;height:1px;background:#3a3a3a;"></div>
<div class="a" style="left:1px;top:706px;width:199.5px;height:1px;background:#3a3a3a;"></div>
<div class="a" style="left:200.5px;top:620.5px;width:1px;height:90.5px;background:#3a3a3a;"></div>
<div class="a" style="left:201.5px;top:620.5px;width:672.5px;height:24.5px;background:#262626;"></div>
<svg style="left:201.5px;top:620.5px" width="672" height="25"><rect x="-0.5" y="13.0" width="1" height="11.5" fill="#5c5c5c"/><rect x="4.5" y="20.5" width="1" height="4" fill="#5c5c5c"/><rect x="9.5" y="20.5" width="1" height="4" fill="#5c5c5c"/><rect x="14.5" y="20.5" width="1" height="4" fill="#5c5c5c"/><rect x="19.5" y="20.5" width="1" height="4" fill="#5c5c5c"/><rect x="24.5" y="16.5" width="1" height="8" fill="#5c5c5c"/><rect x="29.5" y="20.5" width="1" height="4" fill="#5c5c5c"/><rect x="34.5" y="20.5" width="1" height="4" fill="#5c5c5c"/><rect x="39.5" y="20.5" width="1" height="4" fill="#5c5c5c"/><rect x="44.5" y="20.5" width="1" height="4" fill="#5c5c5c"/><rect x="49.5" y="13.0" width="1" height="11.5" fill="#5c5c5c"/><rect x="54.5" y="20.5" width="1" height="4" fill="#5c5c5c"/><rect x="59.5" y="20.5" width="1" height="4" fill="#5c5c5c"/><rect x="64.5" y="20.5" width="1" height="4" fill="#5c5c5c"/><rect x="69.5" y="20.5" width="1" height="4" fill="#5c5c5c"/><rect x="74.5" y="16.5" width="1" height="8" fill="#5c5c5c"/><rect x="79.5" y="20.5" width="1" height="4" fill="#5c5c5c"/><rect x="84.5" y="20.5" width="1" height="4" fill="#5c5c5c"/><rect x="89.5" y="20.5" width="1" height="4" fill="#5c5c5c"/><rect x="94.5" y="20.5" width="1" height="4" fill="#5c5c5c"/><rect x="99.5" y="13.0" width="1" height="11.5" fill="#5c5c5c"/><rect x="104.5" y="20.5" width="1" height="4" fill="#5c5c5c"/><rect x="109.5" y="20.5" width="1" height="4" fill="#5c5c5c"/><rect x="114.5" y="20.5" width="1" height="4" fill="#5c5c5c"/><rect x="119.5" y="20.5" width="1" height="4" fill="#5c5c5c"/><rect x="124.5" y="16.5" width="1" height="8" fill="#5c5c5c"/><rect x="129.5" y="20.5" width="1" height="4" fill="#5c5c5c"/><rect x="134.5" y="20.5" width="1" height="4" fill="#5c5c5c"/><rect x="139.5" y="20.5" width="1" height="4" fill="#5c5c5c"/><rect x="144.5" y="20.5" width="1" height="4" fill="#5c5c5c"/><rect x="149.5" y="13.0" width="1" height="11.5" fill="#5c5c5c"/><rect x="154.5" y="20.5" width="1" height="4" fill="#5c5c5c"/><rect x="159.5" y="20.5" width="1" height="4" fill="#5c5c5c"/><rect x="164.5" y="20.5" width="1" height="4" fill="#5c5c5c"/><rect x="169.5" y="20.5" width="1" height="4" fill="#5c5c5c"/><rect x="174.5" y="16.5" width="1" height="8" fill="#5c5c5c"/><rect x="179.5" y="20.5" width="1" height="4" fill="#5c5c5c"/><rect x="184.5" y="20.5" width="1" height="4" fill="#5c5c5c"/><rect x="189.5" y="20.5" width="1" height="4" fill="#5c5c5c"/><rect x="194.5" y="20.5" width="1" height="4" fill="#5c5c5c"/><rect x="199.5" y="13.0" width="1" height="11.5" fill="#5c5c5c"/><rect x="204.5" y="20.5" width="1" height="4" fill="#5c5c5c"/><rect x="209.5" y="20.5" width="1" height="4" fill="#5c5c5c"/><rect x="214.5" y="20.5" width="1" height="4" fill="#5c5c5c"/><rect x="219.5" y="20.5" width="1" height="4" fill="#5c5c5c"/><rect x="224.5" y="16.5" width="1" height="8" fill="#5c5c5c"/><rect x="229.5" y="20.5" width="1" height="4" fill="#5c5c5c"/><rect x="234.5" y="20.5" width="1" height="4" fill="#5c5c5c"/><rect x="239.5" y="20.5" width="1" height="4" fill="#5c5c5c"/><rect x="244.5" y="20.5" width="1" height="4" fill="#5c5c5c"/><rect x="249.5" y="13.0" width="1" height="11.5" fill="#5c5c5c"/><rect x="254.5" y="20.5" width="1" height="4" fill="#5c5c5c"/><rect x="259.5" y="20.5" width="1" height="4" fill="#5c5c5c"/><rect x="264.5" y="20.5" width="1" height="4" fill="#5c5c5c"/><rect x="269.5" y="20.5" width="1" height="4" fill="#5c5c5c"/><rect x="274.5" y="16.5" width="1" height="8" fill="#5c5c5c"/><rect x="279.5" y="20.5" width="1" height="4" fill="#5c5c5c"/><rect x="284.5" y="20.5" width="1" height="4" fill="#5c5c5c"/><rect x="289.5" y="20.5" width="1" height="4" fill="#5c5c5c"/><rect x="294.5" y="20.5" width="1" height="4" fill="#5c5c5c"/><rect x="299.5" y="13.0" width="1" height="11.5" fill="#5c5c5c"/><rect x="304.5" y="20.5" width="1" height="4" fill="#5c5c5c"/><rect x="309.5" y="20.5" width="1" height="4" fill="#5c5c5c"/><rect x="314.5" y="20.5" width="1" height="4" fill="#5c5c5c"/><rect x="319.5" y="20.5" width="1" height="4" fill="#5c5c5c"/><rect x="324.5" y="16.5" width="1" height="8" fill="#5c5c5c"/><rect x="329.5" y="20.5" width="1" height="4" fill="#5c5c5c"/><rect x="334.5" y="20.5" width="1" height="4" fill="#5c5c5c"/><rect x="339.5" y="20.5" width="1" height="4" fill="#5c5c5c"/><rect x="344.5" y="20.5" width="1" height="4" fill="#5c5c5c"/><rect x="349.5" y="13.0" width="1" height="11.5" fill="#5c5c5c"/><rect x="354.5" y="20.5" width="1" height="4" fill="#5c5c5c"/><rect x="359.5" y="20.5" width="1" height="4" fill="#5c5c5c"/><rect x="364.5" y="20.5" width="1" height="4" fill="#5c5c5c"/><rect x="369.5" y="20.5" width="1" height="4" fill="#5c5c5c"/><rect x="374.5" y="16.5" width="1" height="8" fill="#5c5c5c"/><rect x="379.5" y="20.5" width="1" height="4" fill="#5c5c5c"/><rect x="384.5" y="20.5" width="1" height="4" fill="#5c5c5c"/><rect x="389.5" y="20.5" width="1" height="4" fill="#5c5c5c"/><rect x="394.5" y="20.5" width="1" height="4" fill="#5c5c5c"/><rect x="399.5" y="13.0" width="1" height="11.5" fill="#5c5c5c"/><rect x="404.5" y="20.5" width="1" height="4" fill="#5c5c5c"/><rect x="409.5" y="20.5" width="1" height="4" fill="#5c5c5c"/><rect x="414.5" y="20.5" width="1" height="4" fill="#5c5c5c"/><rect x="419.5" y="20.5" width="1" height="4" fill="#5c5c5c"/><rect x="424.5" y="16.5" width="1" height="8" fill="#5c5c5c"/><rect x="429.5" y="20.5" width="1" height="4" fill="#5c5c5c"/><rect x="434.5" y="20.5" width="1" height="4" fill="#5c5c5c"/><rect x="439.5" y="20.5" width="1" height="4" fill="#5c5c5c"/><rect x="444.5" y="20.5" width="1" height="4" fill="#5c5c5c"/><rect x="449.5" y="13.0" width="1" height="11.5" fill="#5c5c5c"/><rect x="454.5" y="20.5" width="1" height="4" fill="#5c5c5c"/><rect x="459.5" y="20.5" width="1" height="4" fill="#5c5c5c"/><rect x="464.5" y="20.5" width="1" height="4" fill="#5c5c5c"/><rect x="469.5" y="20.5" width="1" height="4" fill="#5c5c5c"/><rect x="474.5" y="16.5" width="1" height="8" fill="#5c5c5c"/><rect x="479.5" y="20.5" width="1" height="4" fill="#5c5c5c"/><rect x="484.5" y="20.5" width="1" height="4" fill="#5c5c5c"/><rect x="489.5" y="20.5" width="1" height="4" fill="#5c5c5c"/><rect x="494.5" y="20.5" width="1" height="4" fill="#5c5c5c"/><rect x="499.5" y="13.0" width="1" height="11.5" fill="#5c5c5c"/><rect x="504.5" y="20.5" width="1" height="4" fill="#5c5c5c"/><rect x="509.5" y="20.5" width="1" height="4" fill="#5c5c5c"/><rect x="514.5" y="20.5" width="1" height="4" fill="#5c5c5c"/><rect x="519.5" y="20.5" width="1" height="4" fill="#5c5c5c"/><rect x="524.5" y="16.5" width="1" height="8" fill="#5c5c5c"/><rect x="529.5" y="20.5" width="1" height="4" fill="#5c5c5c"/><rect x="534.5" y="20.5" width="1" height="4" fill="#5c5c5c"/><rect x="539.5" y="20.5" width="1" height="4" fill="#5c5c5c"/><rect x="544.5" y="20.5" width="1" height="4" fill="#5c5c5c"/><rect x="549.5" y="13.0" width="1" height="11.5" fill="#5c5c5c"/><rect x="554.5" y="20.5" width="1" height="4" fill="#5c5c5c"/><rect x="559.5" y="20.5" width="1" height="4" fill="#5c5c5c"/><rect x="564.5" y="20.5" width="1" height="4" fill="#5c5c5c"/><rect x="569.5" y="20.5" width="1" height="4" fill="#5c5c5c"/><rect x="574.5" y="16.5" width="1" height="8" fill="#5c5c5c"/><rect x="579.5" y="20.5" width="1" height="4" fill="#5c5c5c"/><rect x="584.5" y="20.5" width="1" height="4" fill="#5c5c5c"/><rect x="589.5" y="20.5" width="1" height="4" fill="#5c5c5c"/><rect x="594.5" y="20.5" width="1" height="4" fill="#5c5c5c"/><rect x="599.5" y="13.0" width="1" height="11.5" fill="#5c5c5c"/><rect x="604.5" y="20.5" width="1" height="4" fill="#5c5c5c"/><rect x="609.5" y="20.5" width="1" height="4" fill="#5c5c5c"/><rect x="614.5" y="20.5" width="1" height="4" fill="#5c5c5c"/><rect x="619.5" y="20.5" width="1" height="4" fill="#5c5c5c"/><rect x="624.5" y="16.5" width="1" height="8" fill="#5c5c5c"/><rect x="629.5" y="20.5" width="1" height="4" fill="#5c5c5c"/><rect x="634.5" y="20.5" width="1" height="4" fill="#5c5c5c"/><rect x="639.5" y="20.5" width="1" height="4" fill="#5c5c5c"/><rect x="644.5" y="20.5" width="1" height="4" fill="#5c5c5c"/><rect x="649.5" y="13.0" width="1" height="11.5" fill="#5c5c5c"/><rect x="654.5" y="20.5" width="1" height="4" fill="#5c5c5c"/><rect x="659.5" y="20.5" width="1" height="4" fill="#5c5c5c"/><rect x="664.5" y="20.5" width="1" height="4" fill="#5c5c5c"/><rect x="669.5" y="20.5" width="1" height="4" fill="#5c5c5c"/></svg>
<div class="a" style="left:201.5px;top:645px;width:672.5px;height:1px;background:#444;"></div>
<div class="t" style="left:201.3px;top:622.8px;font-size:12px;color:#f0f0f0;font-weight:400;font-family:'Liberation Serif'">12</div>
<div class="t" style="left:240.3px;top:622.8px;font-size:12px;color:#f0f0f0;font-weight:400;font-family:'Liberation Serif'">0:13</div>
<div class="t" style="left:290.6px;top:622.8px;font-size:12px;color:#f0f0f0;font-weight:400;font-family:'Liberation Serif'">0:14</div>
<div class="t" style="left:341.0px;top:622.8px;font-size:12px;color:#f0f0f0;font-weight:400;font-family:'Liberation Serif'">0:15</div>
<div class="t" style="left:445.0px;top:622.8px;font-size:12px;color:#f0f0f0;font-weight:400;font-family:'Liberation Serif'">:17</div>
<div class="t" style="left:491.2px;top:622.8px;font-size:12px;color:#f0f0f0;font-weight:400;font-family:'Liberation Serif'">0:18</div>
<div class="t" style="left:541.0px;top:622.8px;font-size:12px;color:#f0f0f0;font-weight:400;font-family:'Liberation Serif'">0:19</div>
<div class="t" style="left:591.0px;top:622.8px;font-size:12px;color:#f0f0f0;font-weight:400;font-family:'Liberation Serif'">0:20</div>
<div class="t" style="left:641.0px;top:622.8px;font-size:12px;color:#f0f0f0;font-weight:400;font-family:'Liberation Serif'">0:21</div>
<div class="t" style="left:691.0px;top:622.8px;font-size:12px;color:#f0f0f0;font-weight:400;font-family:'Liberation Serif'">0:22</div>
<div class="t" style="left:741.0px;top:622.8px;font-size:12px;color:#f0f0f0;font-weight:400;font-family:'Liberation Serif'">0:23</div>
<div class="t" style="left:791.0px;top:622.8px;font-size:12px;color:#f0f0f0;font-weight:400;font-family:'Liberation Serif'">0:24</div>
<div class="t" style="left:841.0px;top:622.8px;font-size:12px;color:#f0f0f0;font-weight:400;font-family:'Liberation Serif'">0:25</div>
<div class="a" style="left:386px;top:621px;width:58px;height:13px;background:#262626;"></div>
<div class="t" style="left:391.0px;top:622.8px;font-size:12px;color:#f0f0f0;font-weight:400;font-family:'Liberation Serif'">0:</div>
<div class="a" style="left:400.5px;top:621px;width:1px;height:24px;background:#777;"></div>
<div class="t" style="left:402.0px;top:622.3px;font-size:12px;color:#f0f0f0;font-weight:400;font-family:'Liberation Serif'">0:15.620</div>
<div class="a" style="left:444.5px;top:621px;width:0.8px;height:13px;background:#555;"></div>
<div class="a" style="left:201.5px;top:646px;width:659px;height:16px;background:#252525;"></div>
<div class="a" style="left:366px;top:646px;width:164px;height:16px;background:#404040;"></div>
<div class="a" style="left:201.5px;top:663px;width:659px;height:21px;background:#252525;"></div>
<div class="a" style="left:284.5px;top:663px;width:245.5px;height:21px;background:#404040;"></div>
<div class="a" style="left:201.5px;top:685px;width:659px;height:14px;background:#404040;"></div>
<div class="a" style="left:530px;top:685px;width:330.5px;height:14px;background:#252525;"></div>
<div class="a" style="left:201.5px;top:662px;width:659px;height:1px;background:#555;"></div>
<div class="a" style="left:201.5px;top:684px;width:659px;height:1px;background:#555;"></div>
<div class="a" style="left:529px;top:646px;width:1px;height:53px;background:#666;"></div>
<div class="a" style="left:366.8px;top:646px;width:25px;height:12.8px;background:#6f9e70;border:1px solid #8aa88a"></div>
<div class="a" style="left:285px;top:666.6px;width:24.5px;height:13.6px;background:#72a074;border:1px solid #909090"></div>
<div class="a" style="left:504.3px;top:646px;width:25.5px;height:13px;background:#a07373;"></div>
<div class="a" style="left:504.3px;top:666.6px;width:25.5px;height:13.6px;background:#a07373;"></div>
<div class="a" style="left:504.3px;top:688px;width:25.5px;height:9.5px;background:#a07373;"></div>
<svg style="left:366px;top:629px" width="34" height="68"><rect x="1" y="1" width="8.5" height="9" fill="#9ac83c"/><rect x="24" y="1" width="8.5" height="9" fill="#f5a830"/><path d="M9 1 H24 V10 L16.5 17 L9 10Z" fill="#22a0b4"/><path d="M16.5 16 V67.5" stroke="#22a0b4" stroke-width="1.2"/></svg>
<div class="a" style="left:201.5px;top:699px;width:659px;height:12px;background:#404040;"></div>
<svg style="left:205px;top:699.5px" width="7" height="10"><path d="M6.5 0.5 L0.5 5 L6.5 9.5Z" fill="#555"/></svg>
<div class="a" style="left:446px;top:700px;width:245px;height:10px;background:#505050;"></div>
<svg style="left:849px;top:700.5px" width="7" height="9"><path d="M0.5 0 L6.5 4.5 L0.5 9Z" fill="#555"/></svg>
<div class="a" style="left:860.5px;top:645px;width:13.5px;height:52.5px;background:#3c3c3c;"></div>
<svg style="left:863px;top:651px" width="9" height="7"><path d="M0 6.5 L4.5 1 L9 6.5Z" fill="#555"/></svg>
<div class="a" style="left:862.5px;top:667px;width:10px;height:8px;background:#555;"></div>
<svg style="left:863px;top:686px" width="9" height="7"><path d="M0 0.5 L4.5 6 L9 0.5Z" fill="#555"/></svg>
<div class="a" style="left:860.5px;top:697.5px;width:13.5px;height:13.5px;background:#1e1e1e;"></div>
<div class="a" style="left:874px;top:585.5px;width:2px;height:125.5px;background:#232323;"></div>
<!-- /TIMELINE_CONTENT -->

<div class="a" style="left:1057px;top:121px;width:2px;height:590px;background:#333"></div>
<div class="a" style="left:0;top:29px;width:1px;height:682px;background:#3a3a3a"></div>
<!-- STATUS -->
<div class="a" style="left:0;top:711px;width:1059px;height:23px;background:#0b0b0b"></div>
<!-- STATUS_CONTENT -->
<div class="t" style="left:5.0px;top:715.9px;font-size:11.3px;color:#f0f0f0;font-weight:400;">Slide: 1 of 1</div>
<svg style="left:578px;top:715px" width="18" height="15"><text x="0" y="6.5" font-size="7.5" fill="#666" font-family="Liberation Serif">abc</text><path d="M5 10 L8.5 13.5 L16.5 5" stroke="#666" stroke-width="1.3" fill="none"/></svg>
<div class="t" style="left:603.0px;top:717.6px;font-size:11.55px;color:#f0f0f0;font-weight:400;">English (United States)</div>
<svg style="left:759px;top:715px" width="14" height="14"><path d="M0.5 0.5 H13" stroke="#f0f0f0" stroke-width="1.2"/><rect x="2" y="1.5" width="9.5" height="6" fill="none" stroke="#f0f0f0" stroke-width="1.2"/><path d="M4 4.5 H9.5" stroke="#f0f0f0"/><path d="M6.75 8 V12.5 M3.5 13 H10" stroke="#f0f0f0" stroke-width="1.3"/></svg>
<svg style="left:785px;top:719px" width="9" height="6"><path d="M0 0 H8.5 L4.25 5Z" fill="#f0f0f0"/></svg>
<div class="a" style="left:802.5px;top:721.5px;width:7.5px;height:2px;background:#f0f0f0;"></div>
<div class="a" style="left:816px;top:721.5px;width:119px;height:1px;background:#f0f0f0;"></div>
<div class="a" style="left:875px;top:719px;width:1px;height:5px;background:#f0f0f0;"></div>
<div class="a" style="left:841px;top:716px;width:4.2px;height:13px;background:#f0f0f0;"></div>
<svg style="left:941px;top:717px" width="9" height="10"><path d="M4.25 0.5 V9.5 M0 5 H8.5" stroke="#f0f0f0" stroke-width="2"/></svg>
<div class="t" style="left:966.0px;top:717.2px;font-size:12px;color:#f0f0f0;font-weight:400;">52%</div>
<svg style="left:1005px;top:714px" width="17" height="16"><rect x="0.5" y="0.5" width="15.5" height="15" fill="none" stroke="#d8d8d8"/><circle cx="8.25" cy="8" r="3.8" fill="none" stroke="#888" stroke-width="0.8"/><path d="M8.25 2.5 L6.75 4.5 H9.75Z M8.25 13.5 L6.75 11.5 H9.75Z M2.75 8 L4.75 6.5 V9.5Z M13.75 8 L11.75 6.5 V9.5Z" fill="#f0f0f0"/></svg>
<!-- /STATUS_CONTENT -->
</body></html>
